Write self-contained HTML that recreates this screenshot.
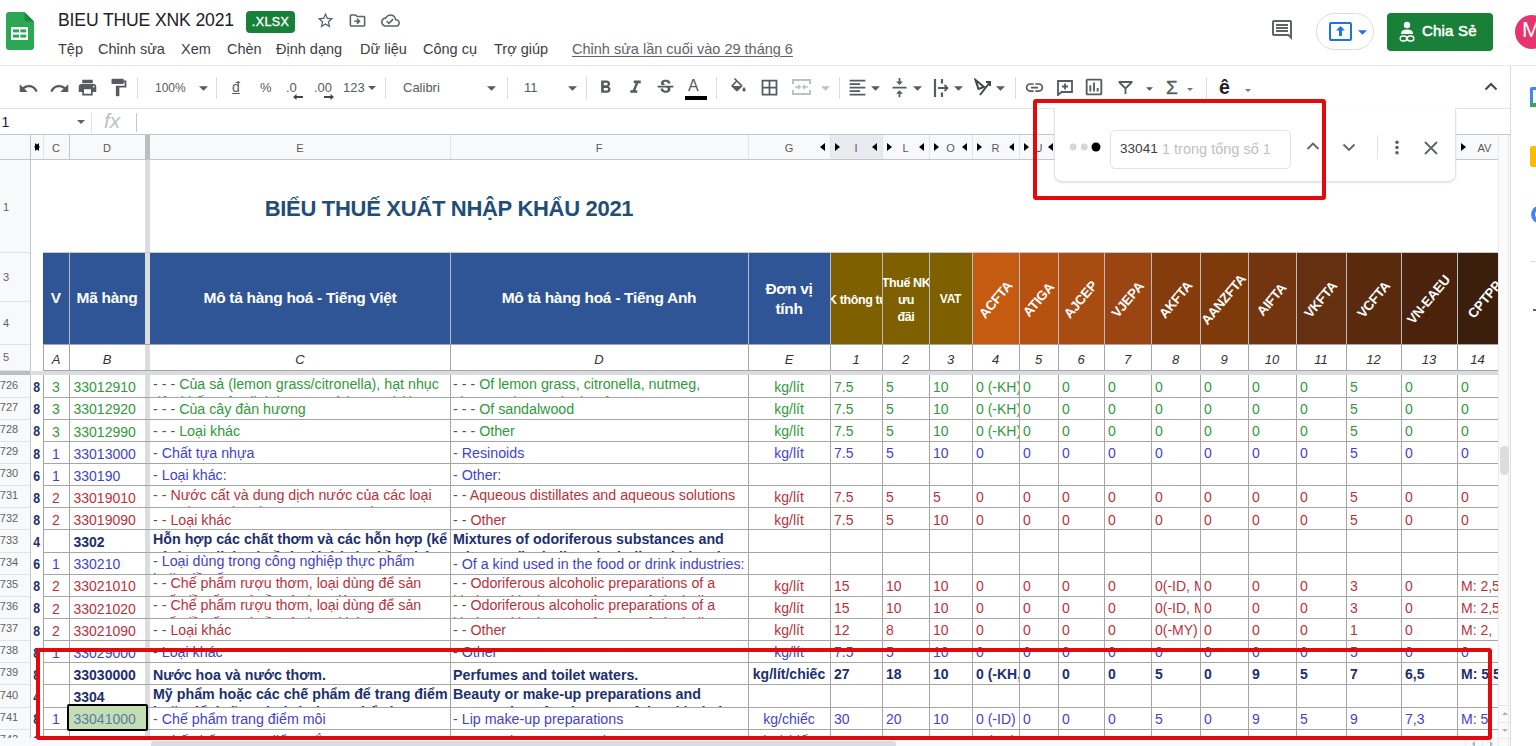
<!DOCTYPE html><html><head><meta charset="utf-8"><title>BIEU THUE XNK 2021</title><style>
html,body{margin:0;padding:0;width:1536px;height:746px;overflow:hidden;background:#fff;}
body{position:relative;font-family:"Liberation Sans", sans-serif;}
div{box-sizing:border-box;}
</style></head><body>
<svg style="position:absolute;left:6px;top:12px" width="28" height="38" viewBox="0 0 28 38"><path d="M3 0H18.5L28 9.5V35Q28 38 25 38H3Q0 38 0 35V3Q0 0 3 0z" fill="#2aa853"/><path d="M18.5 0L28 9.5H21Q18.5 9.5 18.5 7z" fill="#198a3e"/><rect x="5" y="15" width="17" height="13" fill="#fff"/><rect x="7" y="17.4" width="6" height="3" fill="#2aa853"/><rect x="14.4" y="17.4" width="5.8" height="3" fill="#2aa853"/><rect x="7" y="22.6" width="6" height="3" fill="#2aa853"/><rect x="14.4" y="22.6" width="5.8" height="3" fill="#2aa853"/></svg>
<div style="position:absolute;top:12.10px;font-size:17.6px;line-height:1;white-space:nowrap;color:#202124;left:58px;letter-spacing:-0.15px;">BIEU THUE XNK 2021</div>
<div style="position:absolute;left:246px;top:11px;width:49px;height:22px;background:#188038;border-radius:4px;"></div>
<div style="position:absolute;top:16.42px;font-size:12.5px;line-height:1;white-space:nowrap;color:#fff;left:246px;width:49px;text-align:center;letter-spacing:0.4px;-webkit-text-stroke:0.35px #fff;">.XLSX</div>
<svg style="position:absolute;left:316px;top:11px" width="19" height="19" viewBox="0 0 24 24"><path d="M22 9.24l-7.19-.62L12 2 9.19 8.63 2 9.24l5.46 4.73L5.82 21 12 17.27 18.18 21l-1.63-7.03L22 9.24zM12 15.4l-3.76 2.27 1-4.28-3.32-2.88 4.38-.38L12 6.1l1.71 4.04 4.38.38-3.32 2.88 1 4.28L12 15.4z" fill="#5f6368"/></svg>
<svg style="position:absolute;left:348px;top:11px" width="19" height="19" viewBox="0 0 24 24"><path d="M20 6h-8l-2-2H4c-1.1 0-1.99.9-1.99 2L2 18c0 1.1.9 2 2 2h16c1.1 0 2-.9 2-2V8c0-1.1-.9-2-2-2zm0 12H4V6h5.17l2 2H20v10zm-7.84-6H8v2h4.16l-1.59 1.59L11.99 17 16 13.01 11.99 9l-1.41 1.41L12.16 12z" fill="#5f6368"/></svg>
<svg style="position:absolute;left:381px;top:11px" width="19" height="19" viewBox="0 0 24 24"><path d="M19.35 10.04C18.67 6.59 15.64 4 12 4 9.11 4 6.6 5.64 5.35 8.04 2.34 8.36 0 10.91 0 14c0 3.31 2.69 6 6 6h13c2.76 0 5-2.24 5-5 0-2.64-2.05-4.78-4.65-4.96zM19 18H6c-2.21 0-4-1.79-4-4 0-2.05 1.53-3.76 3.56-3.97l1.07-.11.5-.95C8.08 7.14 9.94 6 12 6c2.62 0 4.88 1.86 5.39 4.43l.3 1.5 1.53.11c1.56.1 2.78 1.41 2.78 2.96 0 1.65-1.35 3-3 3zm-9-3.82l-2.09-2.09L6.5 13.5 10 17l6.01-6.01-1.41-1.41z" fill="#5f6368"/></svg>
<div style="position:absolute;top:41.73px;font-size:14.5px;line-height:1;white-space:nowrap;color:#3c4043;left:58px;">Tệp</div>
<div style="position:absolute;top:41.73px;font-size:14.5px;line-height:1;white-space:nowrap;color:#3c4043;left:98px;">Chỉnh sửa</div>
<div style="position:absolute;top:41.73px;font-size:14.5px;line-height:1;white-space:nowrap;color:#3c4043;left:181px;">Xem</div>
<div style="position:absolute;top:41.73px;font-size:14.5px;line-height:1;white-space:nowrap;color:#3c4043;left:227px;">Chèn</div>
<div style="position:absolute;top:41.73px;font-size:14.5px;line-height:1;white-space:nowrap;color:#3c4043;left:276px;">Định dạng</div>
<div style="position:absolute;top:41.73px;font-size:14.5px;line-height:1;white-space:nowrap;color:#3c4043;left:360px;">Dữ liệu</div>
<div style="position:absolute;top:41.73px;font-size:14.5px;line-height:1;white-space:nowrap;color:#3c4043;left:423px;">Công cụ</div>
<div style="position:absolute;top:41.73px;font-size:14.5px;line-height:1;white-space:nowrap;color:#3c4043;left:494px;">Trợ giúp</div>
<div style="position:absolute;top:41.73px;font-size:14.5px;line-height:1;white-space:nowrap;color:#5f6368;left:572px;text-decoration:underline;text-underline-offset:2px;">Chỉnh sửa lần cuối vào 29 tháng 6</div>
<svg style="position:absolute;left:1270px;top:18px" width="24" height="24" viewBox="0 0 24 24"><path d="M21.99 4c0-1.1-.89-2-1.99-2H4c-1.1 0-2 .9-2 2v12c0 1.1.9 2 2 2h14l4 4-.01-18zM20 4v13.17L18.83 16H4V4h16zM6 12h12v2H6zm0-3h12v2H6zm0-3h12v2H6z" fill="#5f6368"/></svg>
<div style="position:absolute;left:1316px;top:13px;width:58px;height:37px;border:1px solid #dadce0;border-radius:19px;"></div>
<div style="position:absolute;left:1329px;top:22px;width:23px;height:19px;border:2px solid #1a73e8;border-radius:2px;"></div>
<svg style="position:absolute;left:1335px;top:25px" width="11" height="12" viewBox="0 0 11 12"><path d="M5.5 1L1 5.5H4V11H7V5.5H10z" fill="#1a73e8"/></svg>
<svg style="position:absolute;left:1358px;top:30px" width="9" height="5" viewBox="0 0 10 5"><path d="M0 0L10 0L5 5z" fill="#1a73e8"/></svg>
<div style="position:absolute;left:1387px;top:13px;width:106px;height:38px;background:#188038;border-radius:4px;"></div>
<svg style="position:absolute;left:1399px;top:21px" width="16" height="22" viewBox="0 0 16 22"><circle cx="8" cy="4" r="3.2" fill="#fff"/><path d="M2 12.5Q2 8.5 8 8.5Q14 8.5 14 12.5V13H2z" fill="#fff"/><rect x="1.2" y="15" width="6.5" height="5" rx="2.5" fill="none" stroke="#fff" stroke-width="1.4"/><rect x="8.3" y="15" width="6.5" height="5" rx="2.5" fill="none" stroke="#fff" stroke-width="1.4"/></svg>
<div style="position:absolute;top:23.30px;font-size:15px;line-height:1;white-space:nowrap;color:#fff;left:1422px;letter-spacing:0.2px;-webkit-text-stroke:0.55px #fff;">Chia Sẻ</div>
<div style="position:absolute;left:1515px;top:15px;width:34px;height:34px;background:#e8336d;border-radius:50%;"></div>
<div style="position:absolute;top:19.38px;font-size:22px;line-height:1;white-space:nowrap;color:#fff;left:1522px;">M</div>
<div style="position:absolute;left:0px;top:65px;width:1536px;height:1px;background:#e8eaed;"></div>
<svg style="position:absolute;left:17.5px;top:78px" width="21" height="19.25" viewBox="0 0 24 22"><path d="M12.5 8c-2.65 0-5.05.99-6.9 2.6L2 7v9h9l-3.62-3.62c1.39-1.16 3.16-1.88 5.12-1.88 3.54 0 6.55 2.31 7.6 5.5l2.37-.78C21.08 11.03 17.15 8 12.5 8z" fill="#575a5e"/></svg>
<svg style="position:absolute;left:48.5px;top:78px" width="21" height="19.25" viewBox="0 0 24 22"><path d="M18.4 10.6C16.55 8.99 14.15 8 11.5 8c-4.65 0-8.58 3.03-9.96 7.22L3.9 16c1.05-3.19 4.05-5.5 7.6-5.5 1.95 0 3.73.72 5.12 1.88L13 16h9V7l-3.6 3.6z" fill="#575a5e"/></svg>
<svg style="position:absolute;left:77px;top:77px" width="21" height="21" viewBox="0 0 24 24"><path d="M19 8H5c-1.66 0-3 1.34-3 3v6h4v4h12v-4h4v-6c0-1.66-1.34-3-3-3zm-3 11H8v-5h8v5zm3-7c-.55 0-1-.45-1-1s.45-1 1-1 1 .45 1 1-.45 1-1 1zm-1-9H6v4h12V3z" fill="#575a5e"/></svg>
<svg style="position:absolute;left:108px;top:77px" width="21" height="21" viewBox="0 0 24 24"><path d="M18 4V3c0-.55-.45-1-1-1H5c-.55 0-1 .45-1 1v4c0 .55.45 1 1 1h12c.55 0 1-.45 1-1V6h1v4H9v11c0 .55.45 1 1 1h2c.55 0 1-.45 1-1v-9h8V4h-3z" fill="#575a5e"/></svg>
<div style="position:absolute;left:137px;top:77px;width:1px;height:22px;background:#dadce0;"></div>
<div style="position:absolute;top:81.84px;font-size:12px;line-height:1;white-space:nowrap;color:#575a5e;left:155px;">100%</div>
<svg style="position:absolute;left:199px;top:86px" width="9" height="5" viewBox="0 0 10 5"><path d="M0 0L10 0L5 5z" fill="#575a5e"/></svg>
<div style="position:absolute;left:216px;top:77px;width:1px;height:22px;background:#dadce0;"></div>
<div style="position:absolute;top:80.15px;font-size:14px;line-height:1;white-space:nowrap;color:#575a5e;left:232px;text-decoration:underline;">đ</div>
<div style="position:absolute;top:81.00px;font-size:13px;line-height:1;white-space:nowrap;color:#575a5e;left:260px;">%</div>
<div style="position:absolute;top:81.00px;font-size:13px;line-height:1;white-space:nowrap;color:#575a5e;left:286px;">.0</div>
<svg style="position:absolute;left:293px;top:94px" width="10" height="6" viewBox="0 0 10 6"><path d="M0 3L3.5 0V2H10V4H3.5V6z" fill="#444746"/></svg>
<div style="position:absolute;top:81.00px;font-size:13px;line-height:1;white-space:nowrap;color:#575a5e;left:314px;">.00</div>
<svg style="position:absolute;left:324px;top:94px" width="10" height="6" viewBox="0 0 10 6"><path d="M10 3L6.5 0V2H0V4H6.5V6z" fill="#444746"/></svg>
<div style="position:absolute;top:81.00px;font-size:13px;line-height:1;white-space:nowrap;color:#575a5e;left:343px;">123</div>
<svg style="position:absolute;left:368px;top:86px" width="8" height="4" viewBox="0 0 10 5"><path d="M0 0L10 0L5 5z" fill="#575a5e"/></svg>
<div style="position:absolute;left:385px;top:77px;width:1px;height:22px;background:#dadce0;"></div>
<div style="position:absolute;top:81.00px;font-size:13px;line-height:1;white-space:nowrap;color:#575a5e;left:403px;">Calibri</div>
<svg style="position:absolute;left:487px;top:86px" width="9" height="5" viewBox="0 0 10 5"><path d="M0 0L10 0L5 5z" fill="#575a5e"/></svg>
<div style="position:absolute;left:507px;top:77px;width:1px;height:22px;background:#dadce0;"></div>
<div style="position:absolute;top:81.00px;font-size:13px;line-height:1;white-space:nowrap;color:#575a5e;left:524px;">11</div>
<svg style="position:absolute;left:568px;top:86px" width="9" height="5" viewBox="0 0 10 5"><path d="M0 0L10 0L5 5z" fill="#575a5e"/></svg>
<div style="position:absolute;left:586px;top:77px;width:1px;height:22px;background:#dadce0;"></div>
<svg style="position:absolute;left:595px;top:77px" width="21" height="21" viewBox="0 0 24 24"><path d="M15.6 10.79c.97-.67 1.65-1.77 1.65-2.79 0-2.26-1.75-4-4-4H7v14h7.04c2.09 0 3.71-1.7 3.71-3.79 0-1.52-.86-2.82-2.15-3.42zM10 6.5h3c.83 0 1.5.67 1.5 1.5s-.67 1.5-1.5 1.5h-3v-3zm3.5 9H10v-3h3.5c.83 0 1.5.67 1.5 1.5s-.67 1.5-1.5 1.5z" fill="#575a5e"/></svg>
<svg style="position:absolute;left:625px;top:77px" width="21" height="21" viewBox="0 0 24 24"><path d="M10 4v3h2.21l-3.42 8H6v3h8v-3h-2.21l3.42-8H18V4z" fill="#575a5e"/></svg>
<svg style="position:absolute;left:655px;top:77px" width="21" height="21" viewBox="0 0 24 24"><path d="M7.24 8.75c-.26-.48-.39-1.03-.39-1.67 0-.61.13-1.16.4-1.67.26-.5.63-.93 1.11-1.29.48-.35 1.05-.63 1.7-.83.66-.19 1.39-.29 2.18-.29.81 0 1.54.11 2.21.34.66.22 1.23.54 1.69.94.47.4.83.88 1.08 1.43.25.55.38 1.15.38 1.81h-3.01c0-.31-.05-.59-.15-.85-.09-.27-.24-.49-.44-.68-.2-.19-.45-.33-.75-.44-.3-.1-.66-.16-1.06-.16-.39 0-.74.04-1.03.13-.29.09-.53.21-.72.36-.19.16-.34.34-.44.55-.1.21-.15.43-.15.66 0 .48.25.88.74 1.21.38.25.77.48 1.41.7H7.39c-.05-.08-.11-.17-.15-.25zM21 12v-2H3v2h9.62c.18.07.4.14.55.2.37.17.66.34.87.51.21.17.35.36.43.57.07.2.11.43.11.69 0 .23-.05.45-.14.66-.09.2-.23.38-.42.53-.19.15-.42.26-.71.35-.29.08-.63.13-1.01.13-.43 0-.83-.04-1.18-.13s-.66-.23-.91-.42c-.25-.19-.45-.44-.59-.75-.14-.31-.25-.76-.25-1.21H6.4c0 .55.08 1.13.24 1.58.16.45.37.85.65 1.21.28.35.6.66.98.92.37.26.78.48 1.22.65.44.17.9.3 1.38.39.48.08.96.13 1.44.13.8 0 1.53-.09 2.18-.28s1.21-.45 1.67-.79c.46-.34.82-.77 1.07-1.27s.38-1.07.38-1.71c0-.6-.1-1.14-.31-1.61-.05-.11-.11-.23-.17-.33H21z" fill="#575a5e"/></svg>
<div style="position:absolute;top:78.46px;font-size:16px;line-height:1;white-space:nowrap;color:#575a5e;left:688px;">A</div>
<div style="position:absolute;left:685px;top:96px;width:22px;height:4px;background:#000;"></div>
<div style="position:absolute;left:716px;top:77px;width:1px;height:22px;background:#dadce0;"></div>
<svg style="position:absolute;left:729px;top:78px" width="19" height="19" viewBox="0 0 24 24"><path d="M16.56 8.94L7.62 0 6.21 1.41l2.38 2.38-5.15 5.15c-.59.59-.59 1.54 0 2.12l5.5 5.5c.29.29.68.44 1.06.44s.77-.15 1.06-.44l5.5-5.5c.59-.58.59-1.53 0-2.12zM5.21 10L10 5.21 14.79 10H5.21zM19 11.5s-2 2.17-2 3.5c0 1.1.9 2 2 2s2-.9 2-2c0-1.33-2-3.5-2-3.5z" fill="#575a5e"/></svg>
<svg style="position:absolute;left:759px;top:77px" width="21" height="21" viewBox="0 0 24 24"><path d="M3 3v18h18V3H3zm8 16H5v-6h6v6zm0-8H5V5h6v6zm8 8h-6v-6h6v6zm0-8h-6V5h6v6z" fill="#575a5e"/></svg>
<svg style="position:absolute;left:792px;top:79px" width="19" height="16" viewBox="0 0 19 16" fill="none" stroke="#bdc1c6" stroke-width="2"><path d="M1 5V1H18V5M1 11V15H18V11"/><path d="M3 8H8M6 6L8 8L6 10M16 8H11M13 6L11 8L13 10" stroke-width="1.6"/></svg>
<svg style="position:absolute;left:821px;top:86px" width="9" height="5" viewBox="0 0 10 5"><path d="M0 0L10 0L5 5z" fill="#bdc1c6"/></svg>
<div style="position:absolute;left:839px;top:77px;width:1px;height:22px;background:#dadce0;"></div>
<svg style="position:absolute;left:847px;top:77px" width="21" height="21" viewBox="0 0 24 24"><path d="M15 15H3v2h12v-2zm0-8H3v2h12V7zM3 13h18v-2H3v2zm0 8h18v-2H3v2zM3 3v2h18V3H3z" fill="#575a5e"/></svg>
<svg style="position:absolute;left:871px;top:86px" width="9" height="5" viewBox="0 0 10 5"><path d="M0 0L10 0L5 5z" fill="#575a5e"/></svg>
<svg style="position:absolute;left:889px;top:77px" width="21" height="21" viewBox="0 0 24 24"><path d="M8 19h3v4h2v-4h3l-4-4-4 4zm8-14h-3V1h-2v4H8l4 4 4-4zM4 11v2h16v-2H4z" fill="#575a5e"/></svg>
<svg style="position:absolute;left:913px;top:86px" width="9" height="5" viewBox="0 0 10 5"><path d="M0 0L10 0L5 5z" fill="#575a5e"/></svg>
<svg style="position:absolute;left:933px;top:79px" width="17" height="18" viewBox="0 0 17 18" fill="none" stroke="#575a5e" stroke-width="2.2"><path d="M2 0V18"/><path d="M9 0V4.5M9 13.5V18" /><path d="M5 9H14.5M11.5 6L14.5 9L11.5 12" stroke-width="1.8"/></svg>
<svg style="position:absolute;left:954px;top:86px" width="9" height="5" viewBox="0 0 10 5"><path d="M0 0L10 0L5 5z" fill="#575a5e"/></svg>
<svg style="position:absolute;left:974px;top:78px" width="18" height="19" viewBox="0 0 18 19" fill="none" stroke="#444746" stroke-width="2"><path d="M1.5 2L10 9L4.5 11z"/><path d="M6 17L16 4M12 4H16V8"/></svg>
<svg style="position:absolute;left:996px;top:86px" width="9" height="5" viewBox="0 0 10 5"><path d="M0 0L10 0L5 5z" fill="#575a5e"/></svg>
<div style="position:absolute;left:1015px;top:77px;width:1px;height:22px;background:#dadce0;"></div>
<svg style="position:absolute;left:1024px;top:77px" width="21" height="21" viewBox="0 0 24 24"><path d="M3.9 12c0-1.71 1.39-3.1 3.1-3.1h4V7H7c-2.76 0-5 2.24-5 5s2.24 5 5 5h4v-1.9H7c-1.71 0-3.1-1.39-3.1-3.1zM8 13h8v-2H8v2zm9-6h-4v1.9h4c1.71 0 3.1 1.39 3.1 3.1s-1.39 3.1-3.1 3.1h-4V17h4c2.76 0 5-2.24 5-5s-2.24-5-5-5z" fill="#575a5e"/></svg>
<svg style="position:absolute;left:1057px;top:80px" width="16" height="16" viewBox="0 0 16 16" fill="none" stroke="#575a5e" stroke-width="1.8"><path d="M1 1H15V12H4.5L1 15z" stroke-linejoin="miter"/><path d="M8 3.5V9.5M5 6.5H11"/></svg>
<svg style="position:absolute;left:1083px;top:76px" width="22" height="22" viewBox="0 0 24 24"><path d="M19 3H5c-1.1 0-2 .9-2 2v14c0 1.1.9 2 2 2h14c1.1 0 2-.9 2-2V5c0-1.1-.9-2-2-2zm0 16H5V5h14v14zM7 10h2v7H7zm4-3h2v10h-2zm4 6h2v4h-2z" fill="#575a5e"/></svg>
<svg style="position:absolute;left:1118px;top:81px" width="15" height="13" viewBox="0 0 15 13" fill="none" stroke="#575a5e" stroke-width="1.8"><path d="M0.5 1H14.5M1.5 1.5L7.5 7.5L13.5 1.5M7.5 7V13"/></svg>
<svg style="position:absolute;left:1146px;top:87px" width="7" height="4" viewBox="0 0 10 5"><path d="M0 0L10 0L5 5z" fill="#575a5e"/></svg>
<div style="position:absolute;top:77.92px;font-size:19px;line-height:1;white-space:nowrap;color:#575a5e;left:1166px;-webkit-text-stroke:0.4px #575a5e;">Σ</div>
<svg style="position:absolute;left:1187px;top:88px" width="6" height="3" viewBox="0 0 10 5"><path d="M0 0L10 0L5 5z" fill="#777"/></svg>
<div style="position:absolute;left:1206px;top:77px;width:1px;height:22px;background:#dadce0;"></div>
<div style="position:absolute;top:77.99px;font-size:19.5px;line-height:1;white-space:nowrap;color:#202124;font-weight:bold;left:1219px;">ê</div>
<svg style="position:absolute;left:1245px;top:89px" width="6" height="3" viewBox="0 0 10 5"><path d="M0 0L10 0L5 5z" fill="#777"/></svg>
<svg style="position:absolute;left:1484px;top:81px" width="14" height="10" viewBox="0 0 14 10"><path d="M1.5 8.5L7 3L12.5 8.5" fill="none" stroke="#444746" stroke-width="2"/></svg>
<div style="position:absolute;left:0px;top:108px;width:1510px;height:1px;background:#e3e3e3;"></div>
<div style="position:absolute;top:115.15px;font-size:14px;line-height:1;white-space:nowrap;color:#202124;left:1.5px;">1</div>
<svg style="position:absolute;left:77px;top:120px" width="8" height="4" viewBox="0 0 10 5"><path d="M0 0L10 0L5 5z" fill="#5f6368"/></svg>
<div style="position:absolute;left:91px;top:113px;width:1px;height:20px;background:#e0e0e0;"></div>
<div style="position:absolute;top:110.22px;font-size:21px;line-height:1;white-space:nowrap;color:#bdc1c6;left:104px;font-family:"Liberation Serif",serif;"><i>fx</i></div>
<div style="position:absolute;left:136px;top:113px;width:1px;height:19px;background:#c8c8c8;"></div>
<div style="position:absolute;left:0px;top:134px;width:1510px;height:1px;background:#c8c8c8;"></div>
<div style="position:absolute;left:0px;top:135px;width:1498px;height:24px;background:#f8f9fa;"></div>
<div style="position:absolute;left:0px;top:159px;width:1498px;height:1px;background:#c4c7c5;"></div>
<div style="position:absolute;left:30px;top:135px;width:1px;height:24px;background:#c4c7c5;"></div>
<div style="position:absolute;left:43px;top:135px;width:1px;height:24px;background:#e1e3e6;"></div>
<div style="position:absolute;left:69px;top:135px;width:1px;height:24px;background:#c4c7c5;"></div>
<div style="position:absolute;left:450px;top:135px;width:1px;height:24px;background:#e1e3e6;"></div>
<div style="position:absolute;left:748px;top:135px;width:1px;height:24px;background:#e1e3e6;"></div>
<div style="position:absolute;left:830px;top:135px;width:1px;height:24px;background:#e1e3e6;"></div>
<div style="position:absolute;left:882px;top:135px;width:1px;height:24px;background:#e1e3e6;"></div>
<div style="position:absolute;left:929px;top:135px;width:1px;height:24px;background:#e1e3e6;"></div>
<div style="position:absolute;left:972px;top:135px;width:1px;height:24px;background:#e1e3e6;"></div>
<div style="position:absolute;left:1019px;top:135px;width:1px;height:24px;background:#e1e3e6;"></div>
<div style="position:absolute;left:831px;top:135px;width:51px;height:24px;background:#e8eaed;"></div>
<div style="position:absolute;left:145px;top:135px;width:5px;height:24px;background:#bdbdbd;"></div>
<div style="position:absolute;top:142.69px;font-size:11px;line-height:1;white-space:nowrap;color:#575a5e;left:43px;width:26px;text-align:center;">C</div>
<div style="position:absolute;top:142.69px;font-size:11px;line-height:1;white-space:nowrap;color:#575a5e;left:69px;width:76px;text-align:center;">D</div>
<div style="position:absolute;top:142.69px;font-size:11px;line-height:1;white-space:nowrap;color:#575a5e;left:150px;width:300px;text-align:center;">E</div>
<div style="position:absolute;top:142.69px;font-size:11px;line-height:1;white-space:nowrap;color:#575a5e;left:450px;width:298px;text-align:center;">F</div>
<div style="position:absolute;top:142.69px;font-size:11px;line-height:1;white-space:nowrap;color:#575a5e;left:748px;width:82px;text-align:center;">G</div>
<div style="position:absolute;top:142.69px;font-size:11px;line-height:1;white-space:nowrap;color:#575a5e;left:830px;width:52px;text-align:center;">I</div>
<div style="position:absolute;top:142.69px;font-size:11px;line-height:1;white-space:nowrap;color:#575a5e;left:882px;width:47px;text-align:center;">L</div>
<div style="position:absolute;top:142.69px;font-size:11px;line-height:1;white-space:nowrap;color:#575a5e;left:929px;width:43px;text-align:center;">O</div>
<div style="position:absolute;top:142.69px;font-size:11px;line-height:1;white-space:nowrap;color:#575a5e;left:972px;width:47px;text-align:center;">R</div>
<div style="position:absolute;top:142.69px;font-size:11px;line-height:1;white-space:nowrap;color:#575a5e;left:1019px;width:39px;text-align:center;">U</div>
<svg style="position:absolute;left:35px;top:143px" width="5" height="8" viewBox="0 0 5 8"><path d="M0 0V8L5 4z" fill="#000"/></svg>
<svg style="position:absolute;left:34px;top:143px" width="5" height="8" viewBox="0 0 5 8"><path d="M5 0V8L0 4z" fill="#000"/></svg>
<svg style="position:absolute;left:820px;top:143px" width="5" height="8" viewBox="0 0 5 8"><path d="M5 0V8L0 4z" fill="#000"/></svg>
<svg style="position:absolute;left:872px;top:143px" width="5" height="8" viewBox="0 0 5 8"><path d="M5 0V8L0 4z" fill="#000"/></svg>
<svg style="position:absolute;left:919px;top:143px" width="5" height="8" viewBox="0 0 5 8"><path d="M5 0V8L0 4z" fill="#000"/></svg>
<svg style="position:absolute;left:962px;top:143px" width="5" height="8" viewBox="0 0 5 8"><path d="M5 0V8L0 4z" fill="#000"/></svg>
<svg style="position:absolute;left:1009px;top:143px" width="5" height="8" viewBox="0 0 5 8"><path d="M5 0V8L0 4z" fill="#000"/></svg>
<svg style="position:absolute;left:1048px;top:143px" width="5" height="8" viewBox="0 0 5 8"><path d="M5 0V8L0 4z" fill="#000"/></svg>
<svg style="position:absolute;left:835px;top:143px" width="5" height="8" viewBox="0 0 5 8"><path d="M0 0V8L5 4z" fill="#000"/></svg>
<svg style="position:absolute;left:887px;top:143px" width="5" height="8" viewBox="0 0 5 8"><path d="M0 0V8L5 4z" fill="#000"/></svg>
<svg style="position:absolute;left:934px;top:143px" width="5" height="8" viewBox="0 0 5 8"><path d="M0 0V8L5 4z" fill="#000"/></svg>
<svg style="position:absolute;left:977px;top:143px" width="5" height="8" viewBox="0 0 5 8"><path d="M0 0V8L5 4z" fill="#000"/></svg>
<svg style="position:absolute;left:1024px;top:143px" width="5" height="8" viewBox="0 0 5 8"><path d="M0 0V8L5 4z" fill="#000"/></svg>
<svg style="position:absolute;left:1461px;top:143px" width="5" height="8" viewBox="0 0 5 8"><path d="M0 0V8L5 4z" fill="#000"/></svg>
<div style="position:absolute;top:142.69px;font-size:11px;line-height:1;white-space:nowrap;color:#575a5e;left:1457px;width:41px;text-align:center;padding-left:14px;">AV</div>
<div style="position:absolute;left:0px;top:160px;width:30px;height:586px;background:#f8f9fa;"></div>
<div style="position:absolute;left:30px;top:160px;width:1px;height:586px;background:#c4c7c5;"></div>
<div style="position:absolute;left:0px;top:252px;width:30px;height:1px;background:#e1e3e6;"></div>
<div style="position:absolute;left:0px;top:301px;width:30px;height:1px;background:#e1e3e6;"></div>
<div style="position:absolute;left:0px;top:344px;width:30px;height:1px;background:#e1e3e6;"></div>
<div style="position:absolute;left:0px;top:370px;width:30px;height:1px;background:#e1e3e6;"></div>
<div style="position:absolute;top:201.69px;font-size:11px;line-height:1;white-space:nowrap;color:#5f6368;left:-14px;width:40px;text-align:center;">1</div>
<div style="position:absolute;top:271.69px;font-size:11px;line-height:1;white-space:nowrap;color:#5f6368;left:-14px;width:40px;text-align:center;">3</div>
<div style="position:absolute;top:317.69px;font-size:11px;line-height:1;white-space:nowrap;color:#5f6368;left:-14px;width:40px;text-align:center;">4</div>
<div style="position:absolute;top:351.69px;font-size:11px;line-height:1;white-space:nowrap;color:#5f6368;left:-14px;width:40px;text-align:center;">5</div>
<div style="position:absolute;left:0px;top:371px;width:1498px;height:4px;background:#dadce0;"></div>
<div style="position:absolute;left:145px;top:160px;width:5px;height:586px;background:#dadce0;"></div>
<div style="position:absolute;left:0px;top:371px;width:30px;height:4px;background:#bdbdbd;"></div>
<div style="position:absolute;top:197.68px;font-size:22px;line-height:1;white-space:nowrap;color:#1f4e79;font-weight:bold;left:150px;width:598px;text-align:center;letter-spacing:-0.3px;">BIỂU THUẾ XUẤT NHẬP KHẨU 2021</div>
<div style="position:absolute;left:43px;top:252px;width:26px;height:92px;background:#2f5597;"></div>
<div style="position:absolute;left:69px;top:252px;width:76px;height:92px;background:#2f5597;"></div>
<div style="position:absolute;left:150px;top:252px;width:300px;height:92px;background:#2f5597;"></div>
<div style="position:absolute;left:450px;top:252px;width:298px;height:92px;background:#2f5597;"></div>
<div style="position:absolute;left:748px;top:252px;width:82px;height:92px;background:#2f5597;"></div>
<div style="position:absolute;left:830px;top:252px;width:52px;height:92px;background:#7f6000;"></div>
<div style="position:absolute;left:882px;top:252px;width:47px;height:92px;background:#7f6000;"></div>
<div style="position:absolute;left:929px;top:252px;width:43px;height:92px;background:#7f6000;"></div>
<div style="position:absolute;left:972px;top:252px;width:47px;height:92px;background:#c55a11;"></div>
<div style="position:absolute;left:1019px;top:252px;width:39px;height:92px;background:#b65110;"></div>
<div style="position:absolute;left:1058px;top:252px;width:46px;height:92px;background:#a94c12;"></div>
<div style="position:absolute;left:1104px;top:252px;width:47px;height:92px;background:#9b4512;"></div>
<div style="position:absolute;left:1151px;top:252px;width:49px;height:92px;background:#843c0c;"></div>
<div style="position:absolute;left:1200px;top:252px;width:48px;height:92px;background:#7f3a0c;"></div>
<div style="position:absolute;left:1248px;top:252px;width:48px;height:92px;background:#723510;"></div>
<div style="position:absolute;left:1296px;top:252px;width:50px;height:92px;background:#65300f;"></div>
<div style="position:absolute;left:1346px;top:252px;width:55px;height:92px;background:#5a2a0e;"></div>
<div style="position:absolute;left:1401px;top:252px;width:56px;height:92px;background:#4b230c;"></div>
<div style="position:absolute;left:1457px;top:252px;width:41px;height:92px;background:#3b1e0c;"></div>
<div style="position:absolute;left:69px;top:252px;width:1px;height:92px;background:#b8bcc4;"></div>
<div style="position:absolute;left:450px;top:252px;width:1px;height:92px;background:#b8bcc4;"></div>
<div style="position:absolute;left:748px;top:252px;width:1px;height:92px;background:#b8bcc4;"></div>
<div style="position:absolute;left:830px;top:252px;width:1px;height:92px;background:#b8bcc4;"></div>
<div style="position:absolute;left:882px;top:252px;width:1px;height:92px;background:#b8bcc4;"></div>
<div style="position:absolute;left:929px;top:252px;width:1px;height:92px;background:#b8bcc4;"></div>
<div style="position:absolute;left:972px;top:252px;width:1px;height:92px;background:#b8bcc4;"></div>
<div style="position:absolute;left:1019px;top:252px;width:1px;height:92px;background:#b8bcc4;"></div>
<div style="position:absolute;left:1058px;top:252px;width:1px;height:92px;background:#b8bcc4;"></div>
<div style="position:absolute;left:1104px;top:252px;width:1px;height:92px;background:#b8bcc4;"></div>
<div style="position:absolute;left:1151px;top:252px;width:1px;height:92px;background:#b8bcc4;"></div>
<div style="position:absolute;left:1200px;top:252px;width:1px;height:92px;background:#b8bcc4;"></div>
<div style="position:absolute;left:1248px;top:252px;width:1px;height:92px;background:#b8bcc4;"></div>
<div style="position:absolute;left:1296px;top:252px;width:1px;height:92px;background:#b8bcc4;"></div>
<div style="position:absolute;left:1346px;top:252px;width:1px;height:92px;background:#b8bcc4;"></div>
<div style="position:absolute;left:1401px;top:252px;width:1px;height:92px;background:#b8bcc4;"></div>
<div style="position:absolute;left:1457px;top:252px;width:1px;height:92px;background:#b8bcc4;"></div>
<div style="position:absolute;left:43px;top:252px;width:1455px;height:1px;background:#c9c9c9;"></div>
<div style="position:absolute;top:289.88px;font-size:15.5px;line-height:1;white-space:nowrap;color:#ffffff;font-weight:bold;left:43px;width:26px;text-align:center;">V</div>
<div style="position:absolute;top:289.88px;font-size:15.5px;line-height:1;white-space:nowrap;color:#ffffff;font-weight:bold;left:69px;width:76px;text-align:center;letter-spacing:-0.3px;">Mã hàng</div>
<div style="position:absolute;top:289.88px;font-size:15.5px;line-height:1;white-space:nowrap;color:#ffffff;font-weight:bold;left:150px;width:300px;text-align:center;letter-spacing:-0.3px;">Mô tả hàng hoá - Tiếng Việt</div>
<div style="position:absolute;top:289.88px;font-size:15.5px;line-height:1;white-space:nowrap;color:#ffffff;font-weight:bold;left:450px;width:298px;text-align:center;letter-spacing:-0.3px;">Mô tả hàng hoá - Tiếng Anh</div>
<div style="position:absolute;top:280.88px;font-size:15.5px;line-height:1;white-space:nowrap;color:#ffffff;font-weight:bold;left:748px;width:82px;text-align:center;letter-spacing:-0.3px;">Đơn vị</div>
<div style="position:absolute;top:300.88px;font-size:15.5px;line-height:1;white-space:nowrap;color:#ffffff;font-weight:bold;left:748px;width:82px;text-align:center;letter-spacing:-0.3px;">tính</div>
<div style="position:absolute;left:831px;top:252px;width:51px;height:92px;overflow:hidden;"><div style="position:absolute;left:-3px;top:42px;font-size:12.5px;line-height:1;font-weight:bold;color:#fff;white-space:nowrap;letter-spacing:-0.4px;">K thông tư</div></div>
<div style="position:absolute;left:883px;top:252px;width:46px;height:92px;overflow:hidden;"><div style="position:absolute;left:-4px;top:23px;width:54px;text-align:center;font-size:12.5px;line-height:17px;font-weight:bold;color:#fff;white-space:nowrap;letter-spacing:-0.4px;">Thuế NK<br>ưu<br>đãi</div></div>
<div style="position:absolute;top:292.84px;font-size:12px;line-height:1;white-space:nowrap;color:#ffffff;font-weight:bold;left:929px;width:43px;text-align:center;letter-spacing:-0.3px;">VAT</div>
<div style="position:absolute;left:973px;top:252px;width:46px;height:92px;overflow:hidden;"><div style="position:absolute;left:-17.5px;top:41px;width:80px;text-align:center;font-size:13.5px;line-height:14px;font-weight:bold;color:#fff;white-space:nowrap;transform:rotate(-50deg);letter-spacing:-0.3px;">ACFTA</div></div>
<div style="position:absolute;left:1020px;top:252px;width:38px;height:92px;overflow:hidden;"><div style="position:absolute;left:-21.5px;top:41px;width:80px;text-align:center;font-size:13.5px;line-height:14px;font-weight:bold;color:#fff;white-space:nowrap;transform:rotate(-50deg);letter-spacing:-0.3px;">ATIGA</div></div>
<div style="position:absolute;left:1059px;top:252px;width:45px;height:92px;overflow:hidden;"><div style="position:absolute;left:-18.0px;top:41px;width:80px;text-align:center;font-size:13.5px;line-height:14px;font-weight:bold;color:#fff;white-space:nowrap;transform:rotate(-50deg);letter-spacing:-0.3px;">AJCEP</div></div>
<div style="position:absolute;left:1105px;top:252px;width:46px;height:92px;overflow:hidden;"><div style="position:absolute;left:-17.5px;top:41px;width:80px;text-align:center;font-size:13.5px;line-height:14px;font-weight:bold;color:#fff;white-space:nowrap;transform:rotate(-50deg);letter-spacing:-0.3px;">VJEPA</div></div>
<div style="position:absolute;left:1152px;top:252px;width:48px;height:92px;overflow:hidden;"><div style="position:absolute;left:-16.5px;top:41px;width:80px;text-align:center;font-size:13.5px;line-height:14px;font-weight:bold;color:#fff;white-space:nowrap;transform:rotate(-50deg);letter-spacing:-0.3px;">AKFTA</div></div>
<div style="position:absolute;left:1201px;top:252px;width:47px;height:92px;overflow:hidden;"><div style="position:absolute;left:-17.0px;top:41px;width:80px;text-align:center;font-size:13.5px;line-height:14px;font-weight:bold;color:#fff;white-space:nowrap;transform:rotate(-50deg);letter-spacing:-0.3px;">AANZFTA</div></div>
<div style="position:absolute;left:1249px;top:252px;width:47px;height:92px;overflow:hidden;"><div style="position:absolute;left:-17.0px;top:41px;width:80px;text-align:center;font-size:13.5px;line-height:14px;font-weight:bold;color:#fff;white-space:nowrap;transform:rotate(-50deg);letter-spacing:-0.3px;">AIFTA</div></div>
<div style="position:absolute;left:1297px;top:252px;width:49px;height:92px;overflow:hidden;"><div style="position:absolute;left:-16.0px;top:41px;width:80px;text-align:center;font-size:13.5px;line-height:14px;font-weight:bold;color:#fff;white-space:nowrap;transform:rotate(-50deg);letter-spacing:-0.3px;">VKFTA</div></div>
<div style="position:absolute;left:1347px;top:252px;width:54px;height:92px;overflow:hidden;"><div style="position:absolute;left:-13.5px;top:41px;width:80px;text-align:center;font-size:13.5px;line-height:14px;font-weight:bold;color:#fff;white-space:nowrap;transform:rotate(-50deg);letter-spacing:-0.3px;">VCFTA</div></div>
<div style="position:absolute;left:1402px;top:252px;width:55px;height:92px;overflow:hidden;"><div style="position:absolute;left:-13.0px;top:41px;width:80px;text-align:center;font-size:13.5px;line-height:14px;font-weight:bold;color:#fff;white-space:nowrap;transform:rotate(-50deg);letter-spacing:-0.3px;">VN-EAEU</div></div>
<div style="position:absolute;left:1458px;top:252px;width:40px;height:92px;overflow:hidden;"><div style="position:absolute;left:-13.5px;top:41px;width:80px;text-align:center;font-size:13.5px;line-height:14px;font-weight:bold;color:#fff;white-space:nowrap;transform:rotate(-50deg);letter-spacing:-0.3px;">CPTPP</div></div>
<div style="position:absolute;left:43px;top:344px;width:1455px;height:1px;background:#a6a6a6;"></div>
<div style="position:absolute;left:43px;top:370px;width:1455px;height:1px;background:#a6a6a6;"></div>
<div style="position:absolute;left:43px;top:344px;width:1px;height:27px;background:#a6a6a6;"></div>
<div style="position:absolute;left:69px;top:344px;width:1px;height:27px;background:#a6a6a6;"></div>
<div style="position:absolute;left:450px;top:344px;width:1px;height:27px;background:#a6a6a6;"></div>
<div style="position:absolute;left:748px;top:344px;width:1px;height:27px;background:#a6a6a6;"></div>
<div style="position:absolute;left:830px;top:344px;width:1px;height:27px;background:#a6a6a6;"></div>
<div style="position:absolute;left:882px;top:344px;width:1px;height:27px;background:#a6a6a6;"></div>
<div style="position:absolute;left:929px;top:344px;width:1px;height:27px;background:#a6a6a6;"></div>
<div style="position:absolute;left:972px;top:344px;width:1px;height:27px;background:#a6a6a6;"></div>
<div style="position:absolute;left:1019px;top:344px;width:1px;height:27px;background:#a6a6a6;"></div>
<div style="position:absolute;left:1058px;top:344px;width:1px;height:27px;background:#a6a6a6;"></div>
<div style="position:absolute;left:1104px;top:344px;width:1px;height:27px;background:#a6a6a6;"></div>
<div style="position:absolute;left:1151px;top:344px;width:1px;height:27px;background:#a6a6a6;"></div>
<div style="position:absolute;left:1200px;top:344px;width:1px;height:27px;background:#a6a6a6;"></div>
<div style="position:absolute;left:1248px;top:344px;width:1px;height:27px;background:#a6a6a6;"></div>
<div style="position:absolute;left:1296px;top:344px;width:1px;height:27px;background:#a6a6a6;"></div>
<div style="position:absolute;left:1346px;top:344px;width:1px;height:27px;background:#a6a6a6;"></div>
<div style="position:absolute;left:1401px;top:344px;width:1px;height:27px;background:#a6a6a6;"></div>
<div style="position:absolute;left:1457px;top:344px;width:1px;height:27px;background:#a6a6a6;"></div>
<div style="position:absolute;left:1498px;top:344px;width:1px;height:27px;background:#a6a6a6;"></div>
<div style="position:absolute;left:43px;top:344px;width:1px;height:27px;background:#a6a6a6;"></div>
<div style="position:absolute;top:352.50px;font-size:13px;line-height:1;white-space:nowrap;color:#333;font-style:italic;left:43px;width:26px;text-align:center;">A</div>
<div style="position:absolute;top:352.50px;font-size:13px;line-height:1;white-space:nowrap;color:#333;font-style:italic;left:69px;width:76px;text-align:center;">B</div>
<div style="position:absolute;top:352.50px;font-size:13px;line-height:1;white-space:nowrap;color:#333;font-style:italic;left:150px;width:300px;text-align:center;">C</div>
<div style="position:absolute;top:352.50px;font-size:13px;line-height:1;white-space:nowrap;color:#333;font-style:italic;left:450px;width:298px;text-align:center;">D</div>
<div style="position:absolute;top:352.50px;font-size:13px;line-height:1;white-space:nowrap;color:#333;font-style:italic;left:748px;width:82px;text-align:center;">E</div>
<div style="position:absolute;top:352.50px;font-size:13px;line-height:1;white-space:nowrap;color:#333;font-style:italic;left:830px;width:52px;text-align:center;">1</div>
<div style="position:absolute;top:352.50px;font-size:13px;line-height:1;white-space:nowrap;color:#333;font-style:italic;left:882px;width:47px;text-align:center;">2</div>
<div style="position:absolute;top:352.50px;font-size:13px;line-height:1;white-space:nowrap;color:#333;font-style:italic;left:929px;width:43px;text-align:center;">3</div>
<div style="position:absolute;top:352.50px;font-size:13px;line-height:1;white-space:nowrap;color:#333;font-style:italic;left:972px;width:47px;text-align:center;">4</div>
<div style="position:absolute;top:352.50px;font-size:13px;line-height:1;white-space:nowrap;color:#333;font-style:italic;left:1019px;width:39px;text-align:center;">5</div>
<div style="position:absolute;top:352.50px;font-size:13px;line-height:1;white-space:nowrap;color:#333;font-style:italic;left:1058px;width:46px;text-align:center;">6</div>
<div style="position:absolute;top:352.50px;font-size:13px;line-height:1;white-space:nowrap;color:#333;font-style:italic;left:1104px;width:47px;text-align:center;">7</div>
<div style="position:absolute;top:352.50px;font-size:13px;line-height:1;white-space:nowrap;color:#333;font-style:italic;left:1151px;width:49px;text-align:center;">8</div>
<div style="position:absolute;top:352.50px;font-size:13px;line-height:1;white-space:nowrap;color:#333;font-style:italic;left:1200px;width:48px;text-align:center;">9</div>
<div style="position:absolute;top:352.50px;font-size:13px;line-height:1;white-space:nowrap;color:#333;font-style:italic;left:1248px;width:48px;text-align:center;">10</div>
<div style="position:absolute;top:352.50px;font-size:13px;line-height:1;white-space:nowrap;color:#333;font-style:italic;left:1296px;width:50px;text-align:center;">11</div>
<div style="position:absolute;top:352.50px;font-size:13px;line-height:1;white-space:nowrap;color:#333;font-style:italic;left:1346px;width:55px;text-align:center;">12</div>
<div style="position:absolute;top:352.50px;font-size:13px;line-height:1;white-space:nowrap;color:#333;font-style:italic;left:1401px;width:56px;text-align:center;">13</div>
<div style="position:absolute;top:352.50px;font-size:13px;line-height:1;white-space:nowrap;color:#333;font-style:italic;left:1457px;width:41px;text-align:center;">14</div>
<div style="position:absolute;top:379.79px;font-size:11px;line-height:1;white-space:nowrap;color:#5f6368;left:-14px;width:40px;text-align:center;">1726</div>
<div style="position:absolute;left:0px;top:397px;width:30px;height:1px;background:#e1e3e6;"></div>
<div style="position:absolute;top:380.13px;font-size:14.5px;line-height:1;white-space:nowrap;color:#1c2f6e;font-weight:bold;left:30px;width:13.6px;text-align:center;transform:scaleX(0.85);">8</div>
<div style="position:absolute;left:43px;top:397px;width:1455px;height:1px;background:#a6a6a6;"></div>
<div style="position:absolute;left:69px;top:375px;width:1px;height:22px;background:#a6a6a6;"></div>
<div style="position:absolute;left:450px;top:375px;width:1px;height:22px;background:#a6a6a6;"></div>
<div style="position:absolute;left:748px;top:375px;width:1px;height:22px;background:#a6a6a6;"></div>
<div style="position:absolute;left:830px;top:375px;width:1px;height:22px;background:#a6a6a6;"></div>
<div style="position:absolute;left:882px;top:375px;width:1px;height:22px;background:#a6a6a6;"></div>
<div style="position:absolute;left:929px;top:375px;width:1px;height:22px;background:#a6a6a6;"></div>
<div style="position:absolute;left:972px;top:375px;width:1px;height:22px;background:#a6a6a6;"></div>
<div style="position:absolute;left:1019px;top:375px;width:1px;height:22px;background:#a6a6a6;"></div>
<div style="position:absolute;left:1058px;top:375px;width:1px;height:22px;background:#a6a6a6;"></div>
<div style="position:absolute;left:1104px;top:375px;width:1px;height:22px;background:#a6a6a6;"></div>
<div style="position:absolute;left:1151px;top:375px;width:1px;height:22px;background:#a6a6a6;"></div>
<div style="position:absolute;left:1200px;top:375px;width:1px;height:22px;background:#a6a6a6;"></div>
<div style="position:absolute;left:1248px;top:375px;width:1px;height:22px;background:#a6a6a6;"></div>
<div style="position:absolute;left:1296px;top:375px;width:1px;height:22px;background:#a6a6a6;"></div>
<div style="position:absolute;left:1346px;top:375px;width:1px;height:22px;background:#a6a6a6;"></div>
<div style="position:absolute;left:1401px;top:375px;width:1px;height:22px;background:#a6a6a6;"></div>
<div style="position:absolute;left:1457px;top:375px;width:1px;height:22px;background:#a6a6a6;"></div>
<div style="position:absolute;left:1498px;top:375px;width:1px;height:22px;background:#a6a6a6;"></div>
<div style="position:absolute;left:43px;top:375px;width:1px;height:22px;background:#a6a6a6;"></div>
<div style="position:absolute;top:380.25px;font-size:14px;line-height:1;white-space:nowrap;color:#2f9a3c;left:43px;width:26px;text-align:center;">3</div>
<div style="position:absolute;top:380.25px;font-size:14px;line-height:1;white-space:nowrap;color:#2f9a3c;left:73.5px;">33012910</div>
<div style="position:absolute;left:151px;top:375px;width:299px;height:22px;overflow:hidden;"><div style="position:absolute;left:2px;top:-0.06px;font-size:14.25px;line-height:18px;white-space:nowrap;color:#2f9a3c;font-weight:normal;"><span style="color:#555">- - - </span>Của sả (lemon grass/citronella), hạt nhục<br>đậu khấu, cây đinh hương, cỏ hương bài</div></div>
<div style="position:absolute;left:451px;top:375px;width:297px;height:22px;overflow:hidden;"><div style="position:absolute;left:2px;top:-0.06px;font-size:14.25px;line-height:18px;white-space:nowrap;color:#2f9a3c;font-weight:normal;"><span style="color:#555">- - - </span>Of lemon grass, citronella, nutmeg,<br>clove, vetiver and other fragrances</div></div>
<div style="position:absolute;top:379.75px;font-size:14px;line-height:1;white-space:nowrap;color:#2f9a3c;left:748px;width:82px;text-align:center;">kg/lít</div>
<div style="position:absolute;left:831px;top:375px;width:51px;height:22px;overflow:hidden;"><div style="position:absolute;left:3px;top:4.75px;font-size:14px;line-height:1;white-space:nowrap;color:#2f9a3c;font-weight:normal;">7.5</div></div>
<div style="position:absolute;left:883px;top:375px;width:46px;height:22px;overflow:hidden;"><div style="position:absolute;left:3px;top:4.75px;font-size:14px;line-height:1;white-space:nowrap;color:#2f9a3c;font-weight:normal;">5</div></div>
<div style="position:absolute;left:930px;top:375px;width:42px;height:22px;overflow:hidden;"><div style="position:absolute;left:3px;top:4.75px;font-size:14px;line-height:1;white-space:nowrap;color:#2f9a3c;font-weight:normal;">10</div></div>
<div style="position:absolute;left:973px;top:375px;width:46px;height:22px;overflow:hidden;"><div style="position:absolute;left:3px;top:4.75px;font-size:14px;line-height:1;white-space:nowrap;color:#2f9a3c;font-weight:normal;">0 (-KH)</div></div>
<div style="position:absolute;left:1020px;top:375px;width:38px;height:22px;overflow:hidden;"><div style="position:absolute;left:3px;top:4.75px;font-size:14px;line-height:1;white-space:nowrap;color:#2f9a3c;font-weight:normal;">0</div></div>
<div style="position:absolute;left:1059px;top:375px;width:45px;height:22px;overflow:hidden;"><div style="position:absolute;left:3px;top:4.75px;font-size:14px;line-height:1;white-space:nowrap;color:#2f9a3c;font-weight:normal;">0</div></div>
<div style="position:absolute;left:1105px;top:375px;width:46px;height:22px;overflow:hidden;"><div style="position:absolute;left:3px;top:4.75px;font-size:14px;line-height:1;white-space:nowrap;color:#2f9a3c;font-weight:normal;">0</div></div>
<div style="position:absolute;left:1152px;top:375px;width:48px;height:22px;overflow:hidden;"><div style="position:absolute;left:3px;top:4.75px;font-size:14px;line-height:1;white-space:nowrap;color:#2f9a3c;font-weight:normal;">0</div></div>
<div style="position:absolute;left:1201px;top:375px;width:47px;height:22px;overflow:hidden;"><div style="position:absolute;left:3px;top:4.75px;font-size:14px;line-height:1;white-space:nowrap;color:#2f9a3c;font-weight:normal;">0</div></div>
<div style="position:absolute;left:1249px;top:375px;width:47px;height:22px;overflow:hidden;"><div style="position:absolute;left:3px;top:4.75px;font-size:14px;line-height:1;white-space:nowrap;color:#2f9a3c;font-weight:normal;">0</div></div>
<div style="position:absolute;left:1297px;top:375px;width:49px;height:22px;overflow:hidden;"><div style="position:absolute;left:3px;top:4.75px;font-size:14px;line-height:1;white-space:nowrap;color:#2f9a3c;font-weight:normal;">0</div></div>
<div style="position:absolute;left:1347px;top:375px;width:54px;height:22px;overflow:hidden;"><div style="position:absolute;left:3px;top:4.75px;font-size:14px;line-height:1;white-space:nowrap;color:#2f9a3c;font-weight:normal;">5</div></div>
<div style="position:absolute;left:1402px;top:375px;width:55px;height:22px;overflow:hidden;"><div style="position:absolute;left:3px;top:4.75px;font-size:14px;line-height:1;white-space:nowrap;color:#2f9a3c;font-weight:normal;">0</div></div>
<div style="position:absolute;left:1458px;top:375px;width:40px;height:22px;overflow:hidden;"><div style="position:absolute;left:3px;top:4.75px;font-size:14px;line-height:1;white-space:nowrap;color:#2f9a3c;font-weight:normal;">0</div></div>
<div style="position:absolute;top:401.92px;font-size:11px;line-height:1;white-space:nowrap;color:#5f6368;left:-14px;width:40px;text-align:center;">1727</div>
<div style="position:absolute;left:0px;top:419px;width:30px;height:1px;background:#e1e3e6;"></div>
<div style="position:absolute;top:402.26px;font-size:14.5px;line-height:1;white-space:nowrap;color:#1c2f6e;font-weight:bold;left:30px;width:13.6px;text-align:center;transform:scaleX(0.85);">8</div>
<div style="position:absolute;left:43px;top:419px;width:1455px;height:1px;background:#a6a6a6;"></div>
<div style="position:absolute;left:69px;top:397px;width:1px;height:22px;background:#a6a6a6;"></div>
<div style="position:absolute;left:450px;top:397px;width:1px;height:22px;background:#a6a6a6;"></div>
<div style="position:absolute;left:748px;top:397px;width:1px;height:22px;background:#a6a6a6;"></div>
<div style="position:absolute;left:830px;top:397px;width:1px;height:22px;background:#a6a6a6;"></div>
<div style="position:absolute;left:882px;top:397px;width:1px;height:22px;background:#a6a6a6;"></div>
<div style="position:absolute;left:929px;top:397px;width:1px;height:22px;background:#a6a6a6;"></div>
<div style="position:absolute;left:972px;top:397px;width:1px;height:22px;background:#a6a6a6;"></div>
<div style="position:absolute;left:1019px;top:397px;width:1px;height:22px;background:#a6a6a6;"></div>
<div style="position:absolute;left:1058px;top:397px;width:1px;height:22px;background:#a6a6a6;"></div>
<div style="position:absolute;left:1104px;top:397px;width:1px;height:22px;background:#a6a6a6;"></div>
<div style="position:absolute;left:1151px;top:397px;width:1px;height:22px;background:#a6a6a6;"></div>
<div style="position:absolute;left:1200px;top:397px;width:1px;height:22px;background:#a6a6a6;"></div>
<div style="position:absolute;left:1248px;top:397px;width:1px;height:22px;background:#a6a6a6;"></div>
<div style="position:absolute;left:1296px;top:397px;width:1px;height:22px;background:#a6a6a6;"></div>
<div style="position:absolute;left:1346px;top:397px;width:1px;height:22px;background:#a6a6a6;"></div>
<div style="position:absolute;left:1401px;top:397px;width:1px;height:22px;background:#a6a6a6;"></div>
<div style="position:absolute;left:1457px;top:397px;width:1px;height:22px;background:#a6a6a6;"></div>
<div style="position:absolute;left:1498px;top:397px;width:1px;height:22px;background:#a6a6a6;"></div>
<div style="position:absolute;left:43px;top:397px;width:1px;height:22px;background:#a6a6a6;"></div>
<div style="position:absolute;top:402.38px;font-size:14px;line-height:1;white-space:nowrap;color:#2f9a3c;left:43px;width:26px;text-align:center;">3</div>
<div style="position:absolute;top:402.38px;font-size:14px;line-height:1;white-space:nowrap;color:#2f9a3c;left:73.5px;">33012920</div>
<div style="position:absolute;left:151px;top:397px;width:299px;height:22px;overflow:hidden;"><div style="position:absolute;left:2px;top:4.97px;font-size:14.25px;line-height:1;white-space:nowrap;color:#2f9a3c;font-weight:normal;"><span style="color:#555">- - - </span>Của cây đàn hương</div></div>
<div style="position:absolute;left:451px;top:397px;width:297px;height:22px;overflow:hidden;"><div style="position:absolute;left:2px;top:4.97px;font-size:14.25px;line-height:1;white-space:nowrap;color:#2f9a3c;font-weight:normal;"><span style="color:#555">- - - </span>Of sandalwood</div></div>
<div style="position:absolute;top:401.88px;font-size:14px;line-height:1;white-space:nowrap;color:#2f9a3c;left:748px;width:82px;text-align:center;">kg/lít</div>
<div style="position:absolute;left:831px;top:397px;width:51px;height:22px;overflow:hidden;"><div style="position:absolute;left:3px;top:4.88px;font-size:14px;line-height:1;white-space:nowrap;color:#2f9a3c;font-weight:normal;">7.5</div></div>
<div style="position:absolute;left:883px;top:397px;width:46px;height:22px;overflow:hidden;"><div style="position:absolute;left:3px;top:4.88px;font-size:14px;line-height:1;white-space:nowrap;color:#2f9a3c;font-weight:normal;">5</div></div>
<div style="position:absolute;left:930px;top:397px;width:42px;height:22px;overflow:hidden;"><div style="position:absolute;left:3px;top:4.88px;font-size:14px;line-height:1;white-space:nowrap;color:#2f9a3c;font-weight:normal;">10</div></div>
<div style="position:absolute;left:973px;top:397px;width:46px;height:22px;overflow:hidden;"><div style="position:absolute;left:3px;top:4.88px;font-size:14px;line-height:1;white-space:nowrap;color:#2f9a3c;font-weight:normal;">0 (-KH)</div></div>
<div style="position:absolute;left:1020px;top:397px;width:38px;height:22px;overflow:hidden;"><div style="position:absolute;left:3px;top:4.88px;font-size:14px;line-height:1;white-space:nowrap;color:#2f9a3c;font-weight:normal;">0</div></div>
<div style="position:absolute;left:1059px;top:397px;width:45px;height:22px;overflow:hidden;"><div style="position:absolute;left:3px;top:4.88px;font-size:14px;line-height:1;white-space:nowrap;color:#2f9a3c;font-weight:normal;">0</div></div>
<div style="position:absolute;left:1105px;top:397px;width:46px;height:22px;overflow:hidden;"><div style="position:absolute;left:3px;top:4.88px;font-size:14px;line-height:1;white-space:nowrap;color:#2f9a3c;font-weight:normal;">0</div></div>
<div style="position:absolute;left:1152px;top:397px;width:48px;height:22px;overflow:hidden;"><div style="position:absolute;left:3px;top:4.88px;font-size:14px;line-height:1;white-space:nowrap;color:#2f9a3c;font-weight:normal;">0</div></div>
<div style="position:absolute;left:1201px;top:397px;width:47px;height:22px;overflow:hidden;"><div style="position:absolute;left:3px;top:4.88px;font-size:14px;line-height:1;white-space:nowrap;color:#2f9a3c;font-weight:normal;">0</div></div>
<div style="position:absolute;left:1249px;top:397px;width:47px;height:22px;overflow:hidden;"><div style="position:absolute;left:3px;top:4.88px;font-size:14px;line-height:1;white-space:nowrap;color:#2f9a3c;font-weight:normal;">0</div></div>
<div style="position:absolute;left:1297px;top:397px;width:49px;height:22px;overflow:hidden;"><div style="position:absolute;left:3px;top:4.88px;font-size:14px;line-height:1;white-space:nowrap;color:#2f9a3c;font-weight:normal;">0</div></div>
<div style="position:absolute;left:1347px;top:397px;width:54px;height:22px;overflow:hidden;"><div style="position:absolute;left:3px;top:4.88px;font-size:14px;line-height:1;white-space:nowrap;color:#2f9a3c;font-weight:normal;">5</div></div>
<div style="position:absolute;left:1402px;top:397px;width:55px;height:22px;overflow:hidden;"><div style="position:absolute;left:3px;top:4.88px;font-size:14px;line-height:1;white-space:nowrap;color:#2f9a3c;font-weight:normal;">0</div></div>
<div style="position:absolute;left:1458px;top:397px;width:40px;height:22px;overflow:hidden;"><div style="position:absolute;left:3px;top:4.88px;font-size:14px;line-height:1;white-space:nowrap;color:#2f9a3c;font-weight:normal;">0</div></div>
<div style="position:absolute;top:424.05px;font-size:11px;line-height:1;white-space:nowrap;color:#5f6368;left:-14px;width:40px;text-align:center;">1728</div>
<div style="position:absolute;left:0px;top:441px;width:30px;height:1px;background:#e1e3e6;"></div>
<div style="position:absolute;top:424.39px;font-size:14.5px;line-height:1;white-space:nowrap;color:#1c2f6e;font-weight:bold;left:30px;width:13.6px;text-align:center;transform:scaleX(0.85);">8</div>
<div style="position:absolute;left:43px;top:441px;width:1455px;height:1px;background:#a6a6a6;"></div>
<div style="position:absolute;left:69px;top:419px;width:1px;height:22px;background:#a6a6a6;"></div>
<div style="position:absolute;left:450px;top:419px;width:1px;height:22px;background:#a6a6a6;"></div>
<div style="position:absolute;left:748px;top:419px;width:1px;height:22px;background:#a6a6a6;"></div>
<div style="position:absolute;left:830px;top:419px;width:1px;height:22px;background:#a6a6a6;"></div>
<div style="position:absolute;left:882px;top:419px;width:1px;height:22px;background:#a6a6a6;"></div>
<div style="position:absolute;left:929px;top:419px;width:1px;height:22px;background:#a6a6a6;"></div>
<div style="position:absolute;left:972px;top:419px;width:1px;height:22px;background:#a6a6a6;"></div>
<div style="position:absolute;left:1019px;top:419px;width:1px;height:22px;background:#a6a6a6;"></div>
<div style="position:absolute;left:1058px;top:419px;width:1px;height:22px;background:#a6a6a6;"></div>
<div style="position:absolute;left:1104px;top:419px;width:1px;height:22px;background:#a6a6a6;"></div>
<div style="position:absolute;left:1151px;top:419px;width:1px;height:22px;background:#a6a6a6;"></div>
<div style="position:absolute;left:1200px;top:419px;width:1px;height:22px;background:#a6a6a6;"></div>
<div style="position:absolute;left:1248px;top:419px;width:1px;height:22px;background:#a6a6a6;"></div>
<div style="position:absolute;left:1296px;top:419px;width:1px;height:22px;background:#a6a6a6;"></div>
<div style="position:absolute;left:1346px;top:419px;width:1px;height:22px;background:#a6a6a6;"></div>
<div style="position:absolute;left:1401px;top:419px;width:1px;height:22px;background:#a6a6a6;"></div>
<div style="position:absolute;left:1457px;top:419px;width:1px;height:22px;background:#a6a6a6;"></div>
<div style="position:absolute;left:1498px;top:419px;width:1px;height:22px;background:#a6a6a6;"></div>
<div style="position:absolute;left:43px;top:419px;width:1px;height:22px;background:#a6a6a6;"></div>
<div style="position:absolute;top:424.51px;font-size:14px;line-height:1;white-space:nowrap;color:#2f9a3c;left:43px;width:26px;text-align:center;">3</div>
<div style="position:absolute;top:424.51px;font-size:14px;line-height:1;white-space:nowrap;color:#2f9a3c;left:73.5px;">33012990</div>
<div style="position:absolute;left:151px;top:419px;width:299px;height:22px;overflow:hidden;"><div style="position:absolute;left:2px;top:5.10px;font-size:14.25px;line-height:1;white-space:nowrap;color:#2f9a3c;font-weight:normal;"><span style="color:#555">- - - </span>Loại khác</div></div>
<div style="position:absolute;left:451px;top:419px;width:297px;height:22px;overflow:hidden;"><div style="position:absolute;left:2px;top:5.10px;font-size:14.25px;line-height:1;white-space:nowrap;color:#2f9a3c;font-weight:normal;"><span style="color:#555">- - - </span>Other</div></div>
<div style="position:absolute;top:424.01px;font-size:14px;line-height:1;white-space:nowrap;color:#2f9a3c;left:748px;width:82px;text-align:center;">kg/lít</div>
<div style="position:absolute;left:831px;top:419px;width:51px;height:22px;overflow:hidden;"><div style="position:absolute;left:3px;top:5.01px;font-size:14px;line-height:1;white-space:nowrap;color:#2f9a3c;font-weight:normal;">7.5</div></div>
<div style="position:absolute;left:883px;top:419px;width:46px;height:22px;overflow:hidden;"><div style="position:absolute;left:3px;top:5.01px;font-size:14px;line-height:1;white-space:nowrap;color:#2f9a3c;font-weight:normal;">5</div></div>
<div style="position:absolute;left:930px;top:419px;width:42px;height:22px;overflow:hidden;"><div style="position:absolute;left:3px;top:5.01px;font-size:14px;line-height:1;white-space:nowrap;color:#2f9a3c;font-weight:normal;">10</div></div>
<div style="position:absolute;left:973px;top:419px;width:46px;height:22px;overflow:hidden;"><div style="position:absolute;left:3px;top:5.01px;font-size:14px;line-height:1;white-space:nowrap;color:#2f9a3c;font-weight:normal;">0 (-KH)</div></div>
<div style="position:absolute;left:1020px;top:419px;width:38px;height:22px;overflow:hidden;"><div style="position:absolute;left:3px;top:5.01px;font-size:14px;line-height:1;white-space:nowrap;color:#2f9a3c;font-weight:normal;">0</div></div>
<div style="position:absolute;left:1059px;top:419px;width:45px;height:22px;overflow:hidden;"><div style="position:absolute;left:3px;top:5.01px;font-size:14px;line-height:1;white-space:nowrap;color:#2f9a3c;font-weight:normal;">0</div></div>
<div style="position:absolute;left:1105px;top:419px;width:46px;height:22px;overflow:hidden;"><div style="position:absolute;left:3px;top:5.01px;font-size:14px;line-height:1;white-space:nowrap;color:#2f9a3c;font-weight:normal;">0</div></div>
<div style="position:absolute;left:1152px;top:419px;width:48px;height:22px;overflow:hidden;"><div style="position:absolute;left:3px;top:5.01px;font-size:14px;line-height:1;white-space:nowrap;color:#2f9a3c;font-weight:normal;">0</div></div>
<div style="position:absolute;left:1201px;top:419px;width:47px;height:22px;overflow:hidden;"><div style="position:absolute;left:3px;top:5.01px;font-size:14px;line-height:1;white-space:nowrap;color:#2f9a3c;font-weight:normal;">0</div></div>
<div style="position:absolute;left:1249px;top:419px;width:47px;height:22px;overflow:hidden;"><div style="position:absolute;left:3px;top:5.01px;font-size:14px;line-height:1;white-space:nowrap;color:#2f9a3c;font-weight:normal;">0</div></div>
<div style="position:absolute;left:1297px;top:419px;width:49px;height:22px;overflow:hidden;"><div style="position:absolute;left:3px;top:5.01px;font-size:14px;line-height:1;white-space:nowrap;color:#2f9a3c;font-weight:normal;">0</div></div>
<div style="position:absolute;left:1347px;top:419px;width:54px;height:22px;overflow:hidden;"><div style="position:absolute;left:3px;top:5.01px;font-size:14px;line-height:1;white-space:nowrap;color:#2f9a3c;font-weight:normal;">5</div></div>
<div style="position:absolute;left:1402px;top:419px;width:55px;height:22px;overflow:hidden;"><div style="position:absolute;left:3px;top:5.01px;font-size:14px;line-height:1;white-space:nowrap;color:#2f9a3c;font-weight:normal;">0</div></div>
<div style="position:absolute;left:1458px;top:419px;width:40px;height:22px;overflow:hidden;"><div style="position:absolute;left:3px;top:5.01px;font-size:14px;line-height:1;white-space:nowrap;color:#2f9a3c;font-weight:normal;">0</div></div>
<div style="position:absolute;top:446.18px;font-size:11px;line-height:1;white-space:nowrap;color:#5f6368;left:-14px;width:40px;text-align:center;">1729</div>
<div style="position:absolute;left:0px;top:463px;width:30px;height:1px;background:#e1e3e6;"></div>
<div style="position:absolute;top:446.52px;font-size:14.5px;line-height:1;white-space:nowrap;color:#1c2f6e;font-weight:bold;left:30px;width:13.6px;text-align:center;transform:scaleX(0.85);">8</div>
<div style="position:absolute;left:43px;top:463px;width:1455px;height:1px;background:#a6a6a6;"></div>
<div style="position:absolute;left:69px;top:441px;width:1px;height:22px;background:#a6a6a6;"></div>
<div style="position:absolute;left:450px;top:441px;width:1px;height:22px;background:#a6a6a6;"></div>
<div style="position:absolute;left:748px;top:441px;width:1px;height:22px;background:#a6a6a6;"></div>
<div style="position:absolute;left:830px;top:441px;width:1px;height:22px;background:#a6a6a6;"></div>
<div style="position:absolute;left:882px;top:441px;width:1px;height:22px;background:#a6a6a6;"></div>
<div style="position:absolute;left:929px;top:441px;width:1px;height:22px;background:#a6a6a6;"></div>
<div style="position:absolute;left:972px;top:441px;width:1px;height:22px;background:#a6a6a6;"></div>
<div style="position:absolute;left:1019px;top:441px;width:1px;height:22px;background:#a6a6a6;"></div>
<div style="position:absolute;left:1058px;top:441px;width:1px;height:22px;background:#a6a6a6;"></div>
<div style="position:absolute;left:1104px;top:441px;width:1px;height:22px;background:#a6a6a6;"></div>
<div style="position:absolute;left:1151px;top:441px;width:1px;height:22px;background:#a6a6a6;"></div>
<div style="position:absolute;left:1200px;top:441px;width:1px;height:22px;background:#a6a6a6;"></div>
<div style="position:absolute;left:1248px;top:441px;width:1px;height:22px;background:#a6a6a6;"></div>
<div style="position:absolute;left:1296px;top:441px;width:1px;height:22px;background:#a6a6a6;"></div>
<div style="position:absolute;left:1346px;top:441px;width:1px;height:22px;background:#a6a6a6;"></div>
<div style="position:absolute;left:1401px;top:441px;width:1px;height:22px;background:#a6a6a6;"></div>
<div style="position:absolute;left:1457px;top:441px;width:1px;height:22px;background:#a6a6a6;"></div>
<div style="position:absolute;left:1498px;top:441px;width:1px;height:22px;background:#a6a6a6;"></div>
<div style="position:absolute;left:43px;top:441px;width:1px;height:22px;background:#a6a6a6;"></div>
<div style="position:absolute;top:446.64px;font-size:14px;line-height:1;white-space:nowrap;color:#4343c8;left:43px;width:26px;text-align:center;">1</div>
<div style="position:absolute;top:446.64px;font-size:14px;line-height:1;white-space:nowrap;color:#4343c8;left:73.5px;">33013000</div>
<div style="position:absolute;left:151px;top:441px;width:299px;height:22px;overflow:hidden;"><div style="position:absolute;left:2px;top:5.23px;font-size:14.25px;line-height:1;white-space:nowrap;color:#4343c8;font-weight:normal;"><span style="color:#555">- </span>Chất tựa nhựa</div></div>
<div style="position:absolute;left:451px;top:441px;width:297px;height:22px;overflow:hidden;"><div style="position:absolute;left:2px;top:5.23px;font-size:14.25px;line-height:1;white-space:nowrap;color:#4343c8;font-weight:normal;"><span style="color:#555">- </span>Resinoids</div></div>
<div style="position:absolute;top:446.14px;font-size:14px;line-height:1;white-space:nowrap;color:#4343c8;left:748px;width:82px;text-align:center;">kg/lít</div>
<div style="position:absolute;left:831px;top:441px;width:51px;height:22px;overflow:hidden;"><div style="position:absolute;left:3px;top:5.14px;font-size:14px;line-height:1;white-space:nowrap;color:#4343c8;font-weight:normal;">7.5</div></div>
<div style="position:absolute;left:883px;top:441px;width:46px;height:22px;overflow:hidden;"><div style="position:absolute;left:3px;top:5.14px;font-size:14px;line-height:1;white-space:nowrap;color:#4343c8;font-weight:normal;">5</div></div>
<div style="position:absolute;left:930px;top:441px;width:42px;height:22px;overflow:hidden;"><div style="position:absolute;left:3px;top:5.14px;font-size:14px;line-height:1;white-space:nowrap;color:#4343c8;font-weight:normal;">10</div></div>
<div style="position:absolute;left:973px;top:441px;width:46px;height:22px;overflow:hidden;"><div style="position:absolute;left:3px;top:5.14px;font-size:14px;line-height:1;white-space:nowrap;color:#4343c8;font-weight:normal;">0</div></div>
<div style="position:absolute;left:1020px;top:441px;width:38px;height:22px;overflow:hidden;"><div style="position:absolute;left:3px;top:5.14px;font-size:14px;line-height:1;white-space:nowrap;color:#4343c8;font-weight:normal;">0</div></div>
<div style="position:absolute;left:1059px;top:441px;width:45px;height:22px;overflow:hidden;"><div style="position:absolute;left:3px;top:5.14px;font-size:14px;line-height:1;white-space:nowrap;color:#4343c8;font-weight:normal;">0</div></div>
<div style="position:absolute;left:1105px;top:441px;width:46px;height:22px;overflow:hidden;"><div style="position:absolute;left:3px;top:5.14px;font-size:14px;line-height:1;white-space:nowrap;color:#4343c8;font-weight:normal;">0</div></div>
<div style="position:absolute;left:1152px;top:441px;width:48px;height:22px;overflow:hidden;"><div style="position:absolute;left:3px;top:5.14px;font-size:14px;line-height:1;white-space:nowrap;color:#4343c8;font-weight:normal;">0</div></div>
<div style="position:absolute;left:1201px;top:441px;width:47px;height:22px;overflow:hidden;"><div style="position:absolute;left:3px;top:5.14px;font-size:14px;line-height:1;white-space:nowrap;color:#4343c8;font-weight:normal;">0</div></div>
<div style="position:absolute;left:1249px;top:441px;width:47px;height:22px;overflow:hidden;"><div style="position:absolute;left:3px;top:5.14px;font-size:14px;line-height:1;white-space:nowrap;color:#4343c8;font-weight:normal;">0</div></div>
<div style="position:absolute;left:1297px;top:441px;width:49px;height:22px;overflow:hidden;"><div style="position:absolute;left:3px;top:5.14px;font-size:14px;line-height:1;white-space:nowrap;color:#4343c8;font-weight:normal;">0</div></div>
<div style="position:absolute;left:1347px;top:441px;width:54px;height:22px;overflow:hidden;"><div style="position:absolute;left:3px;top:5.14px;font-size:14px;line-height:1;white-space:nowrap;color:#4343c8;font-weight:normal;">5</div></div>
<div style="position:absolute;left:1402px;top:441px;width:55px;height:22px;overflow:hidden;"><div style="position:absolute;left:3px;top:5.14px;font-size:14px;line-height:1;white-space:nowrap;color:#4343c8;font-weight:normal;">0</div></div>
<div style="position:absolute;left:1458px;top:441px;width:40px;height:22px;overflow:hidden;"><div style="position:absolute;left:3px;top:5.14px;font-size:14px;line-height:1;white-space:nowrap;color:#4343c8;font-weight:normal;">0</div></div>
<div style="position:absolute;top:468.31px;font-size:11px;line-height:1;white-space:nowrap;color:#5f6368;left:-14px;width:40px;text-align:center;">1730</div>
<div style="position:absolute;left:0px;top:485px;width:30px;height:1px;background:#e1e3e6;"></div>
<div style="position:absolute;top:468.65px;font-size:14.5px;line-height:1;white-space:nowrap;color:#1c2f6e;font-weight:bold;left:30px;width:13.6px;text-align:center;transform:scaleX(0.85);">6</div>
<div style="position:absolute;left:43px;top:485px;width:1455px;height:1px;background:#a6a6a6;"></div>
<div style="position:absolute;left:69px;top:464px;width:1px;height:21px;background:#a6a6a6;"></div>
<div style="position:absolute;left:450px;top:464px;width:1px;height:21px;background:#a6a6a6;"></div>
<div style="position:absolute;left:748px;top:464px;width:1px;height:21px;background:#a6a6a6;"></div>
<div style="position:absolute;left:830px;top:464px;width:1px;height:21px;background:#a6a6a6;"></div>
<div style="position:absolute;left:882px;top:464px;width:1px;height:21px;background:#a6a6a6;"></div>
<div style="position:absolute;left:929px;top:464px;width:1px;height:21px;background:#a6a6a6;"></div>
<div style="position:absolute;left:972px;top:464px;width:1px;height:21px;background:#a6a6a6;"></div>
<div style="position:absolute;left:1019px;top:464px;width:1px;height:21px;background:#a6a6a6;"></div>
<div style="position:absolute;left:1058px;top:464px;width:1px;height:21px;background:#a6a6a6;"></div>
<div style="position:absolute;left:1104px;top:464px;width:1px;height:21px;background:#a6a6a6;"></div>
<div style="position:absolute;left:1151px;top:464px;width:1px;height:21px;background:#a6a6a6;"></div>
<div style="position:absolute;left:1200px;top:464px;width:1px;height:21px;background:#a6a6a6;"></div>
<div style="position:absolute;left:1248px;top:464px;width:1px;height:21px;background:#a6a6a6;"></div>
<div style="position:absolute;left:1296px;top:464px;width:1px;height:21px;background:#a6a6a6;"></div>
<div style="position:absolute;left:1346px;top:464px;width:1px;height:21px;background:#a6a6a6;"></div>
<div style="position:absolute;left:1401px;top:464px;width:1px;height:21px;background:#a6a6a6;"></div>
<div style="position:absolute;left:1457px;top:464px;width:1px;height:21px;background:#a6a6a6;"></div>
<div style="position:absolute;left:1498px;top:464px;width:1px;height:21px;background:#a6a6a6;"></div>
<div style="position:absolute;left:43px;top:464px;width:1px;height:21px;background:#a6a6a6;"></div>
<div style="position:absolute;top:468.77px;font-size:14px;line-height:1;white-space:nowrap;color:#4343c8;left:43px;width:26px;text-align:center;">1</div>
<div style="position:absolute;top:468.77px;font-size:14px;line-height:1;white-space:nowrap;color:#4343c8;left:73.5px;">330190</div>
<div style="position:absolute;left:151px;top:464px;width:299px;height:21px;overflow:hidden;"><div style="position:absolute;left:2px;top:4.36px;font-size:14.25px;line-height:1;white-space:nowrap;color:#4343c8;font-weight:normal;"><span style="color:#555">- </span>Loại khác:</div></div>
<div style="position:absolute;left:451px;top:464px;width:297px;height:21px;overflow:hidden;"><div style="position:absolute;left:2px;top:4.36px;font-size:14.25px;line-height:1;white-space:nowrap;color:#4343c8;font-weight:normal;"><span style="color:#555">- </span>Other:</div></div>
<div style="position:absolute;top:490.44px;font-size:11px;line-height:1;white-space:nowrap;color:#5f6368;left:-14px;width:40px;text-align:center;">1731</div>
<div style="position:absolute;left:0px;top:507px;width:30px;height:1px;background:#e1e3e6;"></div>
<div style="position:absolute;top:490.78px;font-size:14.5px;line-height:1;white-space:nowrap;color:#1c2f6e;font-weight:bold;left:30px;width:13.6px;text-align:center;transform:scaleX(0.85);">8</div>
<div style="position:absolute;left:43px;top:507px;width:1455px;height:1px;background:#a6a6a6;"></div>
<div style="position:absolute;left:69px;top:486px;width:1px;height:21px;background:#a6a6a6;"></div>
<div style="position:absolute;left:450px;top:486px;width:1px;height:21px;background:#a6a6a6;"></div>
<div style="position:absolute;left:748px;top:486px;width:1px;height:21px;background:#a6a6a6;"></div>
<div style="position:absolute;left:830px;top:486px;width:1px;height:21px;background:#a6a6a6;"></div>
<div style="position:absolute;left:882px;top:486px;width:1px;height:21px;background:#a6a6a6;"></div>
<div style="position:absolute;left:929px;top:486px;width:1px;height:21px;background:#a6a6a6;"></div>
<div style="position:absolute;left:972px;top:486px;width:1px;height:21px;background:#a6a6a6;"></div>
<div style="position:absolute;left:1019px;top:486px;width:1px;height:21px;background:#a6a6a6;"></div>
<div style="position:absolute;left:1058px;top:486px;width:1px;height:21px;background:#a6a6a6;"></div>
<div style="position:absolute;left:1104px;top:486px;width:1px;height:21px;background:#a6a6a6;"></div>
<div style="position:absolute;left:1151px;top:486px;width:1px;height:21px;background:#a6a6a6;"></div>
<div style="position:absolute;left:1200px;top:486px;width:1px;height:21px;background:#a6a6a6;"></div>
<div style="position:absolute;left:1248px;top:486px;width:1px;height:21px;background:#a6a6a6;"></div>
<div style="position:absolute;left:1296px;top:486px;width:1px;height:21px;background:#a6a6a6;"></div>
<div style="position:absolute;left:1346px;top:486px;width:1px;height:21px;background:#a6a6a6;"></div>
<div style="position:absolute;left:1401px;top:486px;width:1px;height:21px;background:#a6a6a6;"></div>
<div style="position:absolute;left:1457px;top:486px;width:1px;height:21px;background:#a6a6a6;"></div>
<div style="position:absolute;left:1498px;top:486px;width:1px;height:21px;background:#a6a6a6;"></div>
<div style="position:absolute;left:43px;top:486px;width:1px;height:21px;background:#a6a6a6;"></div>
<div style="position:absolute;top:490.90px;font-size:14px;line-height:1;white-space:nowrap;color:#b8323c;left:43px;width:26px;text-align:center;">2</div>
<div style="position:absolute;top:490.90px;font-size:14px;line-height:1;white-space:nowrap;color:#b8323c;left:73.5px;">33019010</div>
<div style="position:absolute;left:151px;top:486px;width:299px;height:21px;overflow:hidden;"><div style="position:absolute;left:2px;top:-0.41px;font-size:14.25px;line-height:18px;white-space:nowrap;color:#b8323c;font-weight:normal;"><span style="color:#555">- - </span>Nước cất và dung dịch nước của các loại<br>tinh dầu, chế phẩm dùng trong y tế</div></div>
<div style="position:absolute;left:451px;top:486px;width:297px;height:21px;overflow:hidden;"><div style="position:absolute;left:2px;top:-0.41px;font-size:14.25px;line-height:18px;white-space:nowrap;color:#b8323c;font-weight:normal;"><span style="color:#555">- - </span>Aqueous distillates and aqueous solutions<br>of essential oils, medicinal preparations</div></div>
<div style="position:absolute;top:490.40px;font-size:14px;line-height:1;white-space:nowrap;color:#b8323c;left:748px;width:82px;text-align:center;">kg/lít</div>
<div style="position:absolute;left:831px;top:486px;width:51px;height:21px;overflow:hidden;"><div style="position:absolute;left:3px;top:4.40px;font-size:14px;line-height:1;white-space:nowrap;color:#b8323c;font-weight:normal;">7.5</div></div>
<div style="position:absolute;left:883px;top:486px;width:46px;height:21px;overflow:hidden;"><div style="position:absolute;left:3px;top:4.40px;font-size:14px;line-height:1;white-space:nowrap;color:#b8323c;font-weight:normal;">5</div></div>
<div style="position:absolute;left:930px;top:486px;width:42px;height:21px;overflow:hidden;"><div style="position:absolute;left:3px;top:4.40px;font-size:14px;line-height:1;white-space:nowrap;color:#b8323c;font-weight:normal;">5</div></div>
<div style="position:absolute;left:973px;top:486px;width:46px;height:21px;overflow:hidden;"><div style="position:absolute;left:3px;top:4.40px;font-size:14px;line-height:1;white-space:nowrap;color:#b8323c;font-weight:normal;">0</div></div>
<div style="position:absolute;left:1020px;top:486px;width:38px;height:21px;overflow:hidden;"><div style="position:absolute;left:3px;top:4.40px;font-size:14px;line-height:1;white-space:nowrap;color:#b8323c;font-weight:normal;">0</div></div>
<div style="position:absolute;left:1059px;top:486px;width:45px;height:21px;overflow:hidden;"><div style="position:absolute;left:3px;top:4.40px;font-size:14px;line-height:1;white-space:nowrap;color:#b8323c;font-weight:normal;">0</div></div>
<div style="position:absolute;left:1105px;top:486px;width:46px;height:21px;overflow:hidden;"><div style="position:absolute;left:3px;top:4.40px;font-size:14px;line-height:1;white-space:nowrap;color:#b8323c;font-weight:normal;">0</div></div>
<div style="position:absolute;left:1152px;top:486px;width:48px;height:21px;overflow:hidden;"><div style="position:absolute;left:3px;top:4.40px;font-size:14px;line-height:1;white-space:nowrap;color:#b8323c;font-weight:normal;">0</div></div>
<div style="position:absolute;left:1201px;top:486px;width:47px;height:21px;overflow:hidden;"><div style="position:absolute;left:3px;top:4.40px;font-size:14px;line-height:1;white-space:nowrap;color:#b8323c;font-weight:normal;">0</div></div>
<div style="position:absolute;left:1249px;top:486px;width:47px;height:21px;overflow:hidden;"><div style="position:absolute;left:3px;top:4.40px;font-size:14px;line-height:1;white-space:nowrap;color:#b8323c;font-weight:normal;">0</div></div>
<div style="position:absolute;left:1297px;top:486px;width:49px;height:21px;overflow:hidden;"><div style="position:absolute;left:3px;top:4.40px;font-size:14px;line-height:1;white-space:nowrap;color:#b8323c;font-weight:normal;">0</div></div>
<div style="position:absolute;left:1347px;top:486px;width:54px;height:21px;overflow:hidden;"><div style="position:absolute;left:3px;top:4.40px;font-size:14px;line-height:1;white-space:nowrap;color:#b8323c;font-weight:normal;">5</div></div>
<div style="position:absolute;left:1402px;top:486px;width:55px;height:21px;overflow:hidden;"><div style="position:absolute;left:3px;top:4.40px;font-size:14px;line-height:1;white-space:nowrap;color:#b8323c;font-weight:normal;">0</div></div>
<div style="position:absolute;left:1458px;top:486px;width:40px;height:21px;overflow:hidden;"><div style="position:absolute;left:3px;top:4.40px;font-size:14px;line-height:1;white-space:nowrap;color:#b8323c;font-weight:normal;">0</div></div>
<div style="position:absolute;top:512.57px;font-size:11px;line-height:1;white-space:nowrap;color:#5f6368;left:-14px;width:40px;text-align:center;">1732</div>
<div style="position:absolute;left:0px;top:529px;width:30px;height:1px;background:#e1e3e6;"></div>
<div style="position:absolute;top:512.91px;font-size:14.5px;line-height:1;white-space:nowrap;color:#1c2f6e;font-weight:bold;left:30px;width:13.6px;text-align:center;transform:scaleX(0.85);">8</div>
<div style="position:absolute;left:43px;top:529px;width:1455px;height:1px;background:#a6a6a6;"></div>
<div style="position:absolute;left:69px;top:508px;width:1px;height:21px;background:#a6a6a6;"></div>
<div style="position:absolute;left:450px;top:508px;width:1px;height:21px;background:#a6a6a6;"></div>
<div style="position:absolute;left:748px;top:508px;width:1px;height:21px;background:#a6a6a6;"></div>
<div style="position:absolute;left:830px;top:508px;width:1px;height:21px;background:#a6a6a6;"></div>
<div style="position:absolute;left:882px;top:508px;width:1px;height:21px;background:#a6a6a6;"></div>
<div style="position:absolute;left:929px;top:508px;width:1px;height:21px;background:#a6a6a6;"></div>
<div style="position:absolute;left:972px;top:508px;width:1px;height:21px;background:#a6a6a6;"></div>
<div style="position:absolute;left:1019px;top:508px;width:1px;height:21px;background:#a6a6a6;"></div>
<div style="position:absolute;left:1058px;top:508px;width:1px;height:21px;background:#a6a6a6;"></div>
<div style="position:absolute;left:1104px;top:508px;width:1px;height:21px;background:#a6a6a6;"></div>
<div style="position:absolute;left:1151px;top:508px;width:1px;height:21px;background:#a6a6a6;"></div>
<div style="position:absolute;left:1200px;top:508px;width:1px;height:21px;background:#a6a6a6;"></div>
<div style="position:absolute;left:1248px;top:508px;width:1px;height:21px;background:#a6a6a6;"></div>
<div style="position:absolute;left:1296px;top:508px;width:1px;height:21px;background:#a6a6a6;"></div>
<div style="position:absolute;left:1346px;top:508px;width:1px;height:21px;background:#a6a6a6;"></div>
<div style="position:absolute;left:1401px;top:508px;width:1px;height:21px;background:#a6a6a6;"></div>
<div style="position:absolute;left:1457px;top:508px;width:1px;height:21px;background:#a6a6a6;"></div>
<div style="position:absolute;left:1498px;top:508px;width:1px;height:21px;background:#a6a6a6;"></div>
<div style="position:absolute;left:43px;top:508px;width:1px;height:21px;background:#a6a6a6;"></div>
<div style="position:absolute;top:513.03px;font-size:14px;line-height:1;white-space:nowrap;color:#b8323c;left:43px;width:26px;text-align:center;">2</div>
<div style="position:absolute;top:513.03px;font-size:14px;line-height:1;white-space:nowrap;color:#b8323c;left:73.5px;">33019090</div>
<div style="position:absolute;left:151px;top:508px;width:299px;height:21px;overflow:hidden;"><div style="position:absolute;left:2px;top:4.62px;font-size:14.25px;line-height:1;white-space:nowrap;color:#b8323c;font-weight:normal;"><span style="color:#555">- - </span>Loại khác</div></div>
<div style="position:absolute;left:451px;top:508px;width:297px;height:21px;overflow:hidden;"><div style="position:absolute;left:2px;top:4.62px;font-size:14.25px;line-height:1;white-space:nowrap;color:#b8323c;font-weight:normal;"><span style="color:#555">- - </span>Other</div></div>
<div style="position:absolute;top:512.53px;font-size:14px;line-height:1;white-space:nowrap;color:#b8323c;left:748px;width:82px;text-align:center;">kg/lít</div>
<div style="position:absolute;left:831px;top:508px;width:51px;height:21px;overflow:hidden;"><div style="position:absolute;left:3px;top:4.53px;font-size:14px;line-height:1;white-space:nowrap;color:#b8323c;font-weight:normal;">7.5</div></div>
<div style="position:absolute;left:883px;top:508px;width:46px;height:21px;overflow:hidden;"><div style="position:absolute;left:3px;top:4.53px;font-size:14px;line-height:1;white-space:nowrap;color:#b8323c;font-weight:normal;">5</div></div>
<div style="position:absolute;left:930px;top:508px;width:42px;height:21px;overflow:hidden;"><div style="position:absolute;left:3px;top:4.53px;font-size:14px;line-height:1;white-space:nowrap;color:#b8323c;font-weight:normal;">10</div></div>
<div style="position:absolute;left:973px;top:508px;width:46px;height:21px;overflow:hidden;"><div style="position:absolute;left:3px;top:4.53px;font-size:14px;line-height:1;white-space:nowrap;color:#b8323c;font-weight:normal;">0</div></div>
<div style="position:absolute;left:1020px;top:508px;width:38px;height:21px;overflow:hidden;"><div style="position:absolute;left:3px;top:4.53px;font-size:14px;line-height:1;white-space:nowrap;color:#b8323c;font-weight:normal;">0</div></div>
<div style="position:absolute;left:1059px;top:508px;width:45px;height:21px;overflow:hidden;"><div style="position:absolute;left:3px;top:4.53px;font-size:14px;line-height:1;white-space:nowrap;color:#b8323c;font-weight:normal;">0</div></div>
<div style="position:absolute;left:1105px;top:508px;width:46px;height:21px;overflow:hidden;"><div style="position:absolute;left:3px;top:4.53px;font-size:14px;line-height:1;white-space:nowrap;color:#b8323c;font-weight:normal;">0</div></div>
<div style="position:absolute;left:1152px;top:508px;width:48px;height:21px;overflow:hidden;"><div style="position:absolute;left:3px;top:4.53px;font-size:14px;line-height:1;white-space:nowrap;color:#b8323c;font-weight:normal;">0</div></div>
<div style="position:absolute;left:1201px;top:508px;width:47px;height:21px;overflow:hidden;"><div style="position:absolute;left:3px;top:4.53px;font-size:14px;line-height:1;white-space:nowrap;color:#b8323c;font-weight:normal;">0</div></div>
<div style="position:absolute;left:1249px;top:508px;width:47px;height:21px;overflow:hidden;"><div style="position:absolute;left:3px;top:4.53px;font-size:14px;line-height:1;white-space:nowrap;color:#b8323c;font-weight:normal;">0</div></div>
<div style="position:absolute;left:1297px;top:508px;width:49px;height:21px;overflow:hidden;"><div style="position:absolute;left:3px;top:4.53px;font-size:14px;line-height:1;white-space:nowrap;color:#b8323c;font-weight:normal;">0</div></div>
<div style="position:absolute;left:1347px;top:508px;width:54px;height:21px;overflow:hidden;"><div style="position:absolute;left:3px;top:4.53px;font-size:14px;line-height:1;white-space:nowrap;color:#b8323c;font-weight:normal;">5</div></div>
<div style="position:absolute;left:1402px;top:508px;width:55px;height:21px;overflow:hidden;"><div style="position:absolute;left:3px;top:4.53px;font-size:14px;line-height:1;white-space:nowrap;color:#b8323c;font-weight:normal;">0</div></div>
<div style="position:absolute;left:1458px;top:508px;width:40px;height:21px;overflow:hidden;"><div style="position:absolute;left:3px;top:4.53px;font-size:14px;line-height:1;white-space:nowrap;color:#b8323c;font-weight:normal;">0</div></div>
<div style="position:absolute;top:534.70px;font-size:11px;line-height:1;white-space:nowrap;color:#5f6368;left:-14px;width:40px;text-align:center;">1733</div>
<div style="position:absolute;left:0px;top:552px;width:30px;height:1px;background:#e1e3e6;"></div>
<div style="position:absolute;top:535.04px;font-size:14.5px;line-height:1;white-space:nowrap;color:#1c2f6e;font-weight:bold;left:30px;width:13.6px;text-align:center;transform:scaleX(0.85);">4</div>
<div style="position:absolute;left:43px;top:552px;width:1455px;height:1px;background:#a6a6a6;"></div>
<div style="position:absolute;left:69px;top:530px;width:1px;height:22px;background:#a6a6a6;"></div>
<div style="position:absolute;left:450px;top:530px;width:1px;height:22px;background:#a6a6a6;"></div>
<div style="position:absolute;left:748px;top:530px;width:1px;height:22px;background:#a6a6a6;"></div>
<div style="position:absolute;left:830px;top:530px;width:1px;height:22px;background:#a6a6a6;"></div>
<div style="position:absolute;left:882px;top:530px;width:1px;height:22px;background:#a6a6a6;"></div>
<div style="position:absolute;left:929px;top:530px;width:1px;height:22px;background:#a6a6a6;"></div>
<div style="position:absolute;left:972px;top:530px;width:1px;height:22px;background:#a6a6a6;"></div>
<div style="position:absolute;left:1019px;top:530px;width:1px;height:22px;background:#a6a6a6;"></div>
<div style="position:absolute;left:1058px;top:530px;width:1px;height:22px;background:#a6a6a6;"></div>
<div style="position:absolute;left:1104px;top:530px;width:1px;height:22px;background:#a6a6a6;"></div>
<div style="position:absolute;left:1151px;top:530px;width:1px;height:22px;background:#a6a6a6;"></div>
<div style="position:absolute;left:1200px;top:530px;width:1px;height:22px;background:#a6a6a6;"></div>
<div style="position:absolute;left:1248px;top:530px;width:1px;height:22px;background:#a6a6a6;"></div>
<div style="position:absolute;left:1296px;top:530px;width:1px;height:22px;background:#a6a6a6;"></div>
<div style="position:absolute;left:1346px;top:530px;width:1px;height:22px;background:#a6a6a6;"></div>
<div style="position:absolute;left:1401px;top:530px;width:1px;height:22px;background:#a6a6a6;"></div>
<div style="position:absolute;left:1457px;top:530px;width:1px;height:22px;background:#a6a6a6;"></div>
<div style="position:absolute;left:1498px;top:530px;width:1px;height:22px;background:#a6a6a6;"></div>
<div style="position:absolute;left:43px;top:530px;width:1px;height:22px;background:#a6a6a6;"></div>
<div style="position:absolute;top:535.16px;font-size:14px;line-height:1;white-space:nowrap;color:#1c2f6e;font-weight:bold;left:43px;width:26px;text-align:center;"></div>
<div style="position:absolute;top:535.16px;font-size:14px;line-height:1;white-space:nowrap;color:#1c2f6e;font-weight:bold;left:73.5px;">3302</div>
<div style="position:absolute;left:151px;top:530px;width:299px;height:22px;overflow:hidden;"><div style="position:absolute;left:2px;top:-0.15px;font-size:14.25px;line-height:18px;white-space:nowrap;color:#1c2f6e;font-weight:bold;">Hỗn hợp các chất thơm và các hỗn hợp (kể<br>cả dung dịch có cồn) với thành phần chủ</div></div>
<div style="position:absolute;left:451px;top:530px;width:297px;height:22px;overflow:hidden;"><div style="position:absolute;left:2px;top:-0.15px;font-size:14.25px;line-height:18px;white-space:nowrap;color:#1c2f6e;font-weight:bold;">Mixtures of odoriferous substances and<br>mixtures (including alcoholic solutions)</div></div>
<div style="position:absolute;top:556.83px;font-size:11px;line-height:1;white-space:nowrap;color:#5f6368;left:-14px;width:40px;text-align:center;">1734</div>
<div style="position:absolute;left:0px;top:574px;width:30px;height:1px;background:#e1e3e6;"></div>
<div style="position:absolute;top:557.17px;font-size:14.5px;line-height:1;white-space:nowrap;color:#1c2f6e;font-weight:bold;left:30px;width:13.6px;text-align:center;transform:scaleX(0.85);">6</div>
<div style="position:absolute;left:43px;top:574px;width:1455px;height:1px;background:#a6a6a6;"></div>
<div style="position:absolute;left:69px;top:552px;width:1px;height:22px;background:#a6a6a6;"></div>
<div style="position:absolute;left:450px;top:552px;width:1px;height:22px;background:#a6a6a6;"></div>
<div style="position:absolute;left:748px;top:552px;width:1px;height:22px;background:#a6a6a6;"></div>
<div style="position:absolute;left:830px;top:552px;width:1px;height:22px;background:#a6a6a6;"></div>
<div style="position:absolute;left:882px;top:552px;width:1px;height:22px;background:#a6a6a6;"></div>
<div style="position:absolute;left:929px;top:552px;width:1px;height:22px;background:#a6a6a6;"></div>
<div style="position:absolute;left:972px;top:552px;width:1px;height:22px;background:#a6a6a6;"></div>
<div style="position:absolute;left:1019px;top:552px;width:1px;height:22px;background:#a6a6a6;"></div>
<div style="position:absolute;left:1058px;top:552px;width:1px;height:22px;background:#a6a6a6;"></div>
<div style="position:absolute;left:1104px;top:552px;width:1px;height:22px;background:#a6a6a6;"></div>
<div style="position:absolute;left:1151px;top:552px;width:1px;height:22px;background:#a6a6a6;"></div>
<div style="position:absolute;left:1200px;top:552px;width:1px;height:22px;background:#a6a6a6;"></div>
<div style="position:absolute;left:1248px;top:552px;width:1px;height:22px;background:#a6a6a6;"></div>
<div style="position:absolute;left:1296px;top:552px;width:1px;height:22px;background:#a6a6a6;"></div>
<div style="position:absolute;left:1346px;top:552px;width:1px;height:22px;background:#a6a6a6;"></div>
<div style="position:absolute;left:1401px;top:552px;width:1px;height:22px;background:#a6a6a6;"></div>
<div style="position:absolute;left:1457px;top:552px;width:1px;height:22px;background:#a6a6a6;"></div>
<div style="position:absolute;left:1498px;top:552px;width:1px;height:22px;background:#a6a6a6;"></div>
<div style="position:absolute;left:43px;top:552px;width:1px;height:22px;background:#a6a6a6;"></div>
<div style="position:absolute;top:557.29px;font-size:14px;line-height:1;white-space:nowrap;color:#4343c8;left:43px;width:26px;text-align:center;">1</div>
<div style="position:absolute;top:557.29px;font-size:14px;line-height:1;white-space:nowrap;color:#4343c8;left:73.5px;">330210</div>
<div style="position:absolute;left:151px;top:552px;width:299px;height:22px;overflow:hidden;"><div style="position:absolute;left:2px;top:-0.02px;font-size:14.25px;line-height:18px;white-space:nowrap;color:#4343c8;font-weight:normal;"><span style="color:#555">- </span>Loại dùng trong công nghiệp thực phẩm<br>hoặc đồ uống:</div></div>
<div style="position:absolute;left:451px;top:552px;width:297px;height:22px;overflow:hidden;"><div style="position:absolute;left:2px;top:4.88px;font-size:14.25px;line-height:1;white-space:nowrap;color:#4343c8;font-weight:normal;"><span style="color:#555">- </span>Of a kind used in the food or drink industries:</div></div>
<div style="position:absolute;top:578.96px;font-size:11px;line-height:1;white-space:nowrap;color:#5f6368;left:-14px;width:40px;text-align:center;">1735</div>
<div style="position:absolute;left:0px;top:596px;width:30px;height:1px;background:#e1e3e6;"></div>
<div style="position:absolute;top:579.30px;font-size:14.5px;line-height:1;white-space:nowrap;color:#1c2f6e;font-weight:bold;left:30px;width:13.6px;text-align:center;transform:scaleX(0.85);">8</div>
<div style="position:absolute;left:43px;top:596px;width:1455px;height:1px;background:#a6a6a6;"></div>
<div style="position:absolute;left:69px;top:574px;width:1px;height:22px;background:#a6a6a6;"></div>
<div style="position:absolute;left:450px;top:574px;width:1px;height:22px;background:#a6a6a6;"></div>
<div style="position:absolute;left:748px;top:574px;width:1px;height:22px;background:#a6a6a6;"></div>
<div style="position:absolute;left:830px;top:574px;width:1px;height:22px;background:#a6a6a6;"></div>
<div style="position:absolute;left:882px;top:574px;width:1px;height:22px;background:#a6a6a6;"></div>
<div style="position:absolute;left:929px;top:574px;width:1px;height:22px;background:#a6a6a6;"></div>
<div style="position:absolute;left:972px;top:574px;width:1px;height:22px;background:#a6a6a6;"></div>
<div style="position:absolute;left:1019px;top:574px;width:1px;height:22px;background:#a6a6a6;"></div>
<div style="position:absolute;left:1058px;top:574px;width:1px;height:22px;background:#a6a6a6;"></div>
<div style="position:absolute;left:1104px;top:574px;width:1px;height:22px;background:#a6a6a6;"></div>
<div style="position:absolute;left:1151px;top:574px;width:1px;height:22px;background:#a6a6a6;"></div>
<div style="position:absolute;left:1200px;top:574px;width:1px;height:22px;background:#a6a6a6;"></div>
<div style="position:absolute;left:1248px;top:574px;width:1px;height:22px;background:#a6a6a6;"></div>
<div style="position:absolute;left:1296px;top:574px;width:1px;height:22px;background:#a6a6a6;"></div>
<div style="position:absolute;left:1346px;top:574px;width:1px;height:22px;background:#a6a6a6;"></div>
<div style="position:absolute;left:1401px;top:574px;width:1px;height:22px;background:#a6a6a6;"></div>
<div style="position:absolute;left:1457px;top:574px;width:1px;height:22px;background:#a6a6a6;"></div>
<div style="position:absolute;left:1498px;top:574px;width:1px;height:22px;background:#a6a6a6;"></div>
<div style="position:absolute;left:43px;top:574px;width:1px;height:22px;background:#a6a6a6;"></div>
<div style="position:absolute;top:579.42px;font-size:14px;line-height:1;white-space:nowrap;color:#b8323c;left:43px;width:26px;text-align:center;">2</div>
<div style="position:absolute;top:579.42px;font-size:14px;line-height:1;white-space:nowrap;color:#b8323c;left:73.5px;">33021010</div>
<div style="position:absolute;left:151px;top:574px;width:299px;height:22px;overflow:hidden;"><div style="position:absolute;left:2px;top:0.11px;font-size:14.25px;line-height:18px;white-space:nowrap;color:#b8323c;font-weight:normal;"><span style="color:#555">- - </span>Chế phẩm rượu thơm, loại dùng để sản<br>xuất đồ uống có cồn, ở dạng lỏng</div></div>
<div style="position:absolute;left:451px;top:574px;width:297px;height:22px;overflow:hidden;"><div style="position:absolute;left:2px;top:0.11px;font-size:14.25px;line-height:18px;white-space:nowrap;color:#b8323c;font-weight:normal;"><span style="color:#555">- - </span>Odoriferous alcoholic preparations of a<br>kind used in the manufacture of alcoholic</div></div>
<div style="position:absolute;top:578.92px;font-size:14px;line-height:1;white-space:nowrap;color:#b8323c;left:748px;width:82px;text-align:center;">kg/lít</div>
<div style="position:absolute;left:831px;top:574px;width:51px;height:22px;overflow:hidden;"><div style="position:absolute;left:3px;top:4.92px;font-size:14px;line-height:1;white-space:nowrap;color:#b8323c;font-weight:normal;">15</div></div>
<div style="position:absolute;left:883px;top:574px;width:46px;height:22px;overflow:hidden;"><div style="position:absolute;left:3px;top:4.92px;font-size:14px;line-height:1;white-space:nowrap;color:#b8323c;font-weight:normal;">10</div></div>
<div style="position:absolute;left:930px;top:574px;width:42px;height:22px;overflow:hidden;"><div style="position:absolute;left:3px;top:4.92px;font-size:14px;line-height:1;white-space:nowrap;color:#b8323c;font-weight:normal;">10</div></div>
<div style="position:absolute;left:973px;top:574px;width:46px;height:22px;overflow:hidden;"><div style="position:absolute;left:3px;top:4.92px;font-size:14px;line-height:1;white-space:nowrap;color:#b8323c;font-weight:normal;">0</div></div>
<div style="position:absolute;left:1020px;top:574px;width:38px;height:22px;overflow:hidden;"><div style="position:absolute;left:3px;top:4.92px;font-size:14px;line-height:1;white-space:nowrap;color:#b8323c;font-weight:normal;">0</div></div>
<div style="position:absolute;left:1059px;top:574px;width:45px;height:22px;overflow:hidden;"><div style="position:absolute;left:3px;top:4.92px;font-size:14px;line-height:1;white-space:nowrap;color:#b8323c;font-weight:normal;">0</div></div>
<div style="position:absolute;left:1105px;top:574px;width:46px;height:22px;overflow:hidden;"><div style="position:absolute;left:3px;top:4.92px;font-size:14px;line-height:1;white-space:nowrap;color:#b8323c;font-weight:normal;">0</div></div>
<div style="position:absolute;left:1152px;top:574px;width:48px;height:22px;overflow:hidden;"><div style="position:absolute;left:3px;top:4.92px;font-size:14px;line-height:1;white-space:nowrap;color:#b8323c;font-weight:normal;">0(-ID, MY)</div></div>
<div style="position:absolute;left:1201px;top:574px;width:47px;height:22px;overflow:hidden;"><div style="position:absolute;left:3px;top:4.92px;font-size:14px;line-height:1;white-space:nowrap;color:#b8323c;font-weight:normal;">0</div></div>
<div style="position:absolute;left:1249px;top:574px;width:47px;height:22px;overflow:hidden;"><div style="position:absolute;left:3px;top:4.92px;font-size:14px;line-height:1;white-space:nowrap;color:#b8323c;font-weight:normal;">0</div></div>
<div style="position:absolute;left:1297px;top:574px;width:49px;height:22px;overflow:hidden;"><div style="position:absolute;left:3px;top:4.92px;font-size:14px;line-height:1;white-space:nowrap;color:#b8323c;font-weight:normal;">0</div></div>
<div style="position:absolute;left:1347px;top:574px;width:54px;height:22px;overflow:hidden;"><div style="position:absolute;left:3px;top:4.92px;font-size:14px;line-height:1;white-space:nowrap;color:#b8323c;font-weight:normal;">3</div></div>
<div style="position:absolute;left:1402px;top:574px;width:55px;height:22px;overflow:hidden;"><div style="position:absolute;left:3px;top:4.92px;font-size:14px;line-height:1;white-space:nowrap;color:#b8323c;font-weight:normal;">0</div></div>
<div style="position:absolute;left:1458px;top:574px;width:40px;height:22px;overflow:hidden;"><div style="position:absolute;left:3px;top:4.92px;font-size:14px;line-height:1;white-space:nowrap;color:#b8323c;font-weight:normal;">M: 2,5</div></div>
<div style="position:absolute;top:601.09px;font-size:11px;line-height:1;white-space:nowrap;color:#5f6368;left:-14px;width:40px;text-align:center;">1736</div>
<div style="position:absolute;left:0px;top:618px;width:30px;height:1px;background:#e1e3e6;"></div>
<div style="position:absolute;top:601.43px;font-size:14.5px;line-height:1;white-space:nowrap;color:#1c2f6e;font-weight:bold;left:30px;width:13.6px;text-align:center;transform:scaleX(0.85);">8</div>
<div style="position:absolute;left:43px;top:618px;width:1455px;height:1px;background:#a6a6a6;"></div>
<div style="position:absolute;left:69px;top:596px;width:1px;height:22px;background:#a6a6a6;"></div>
<div style="position:absolute;left:450px;top:596px;width:1px;height:22px;background:#a6a6a6;"></div>
<div style="position:absolute;left:748px;top:596px;width:1px;height:22px;background:#a6a6a6;"></div>
<div style="position:absolute;left:830px;top:596px;width:1px;height:22px;background:#a6a6a6;"></div>
<div style="position:absolute;left:882px;top:596px;width:1px;height:22px;background:#a6a6a6;"></div>
<div style="position:absolute;left:929px;top:596px;width:1px;height:22px;background:#a6a6a6;"></div>
<div style="position:absolute;left:972px;top:596px;width:1px;height:22px;background:#a6a6a6;"></div>
<div style="position:absolute;left:1019px;top:596px;width:1px;height:22px;background:#a6a6a6;"></div>
<div style="position:absolute;left:1058px;top:596px;width:1px;height:22px;background:#a6a6a6;"></div>
<div style="position:absolute;left:1104px;top:596px;width:1px;height:22px;background:#a6a6a6;"></div>
<div style="position:absolute;left:1151px;top:596px;width:1px;height:22px;background:#a6a6a6;"></div>
<div style="position:absolute;left:1200px;top:596px;width:1px;height:22px;background:#a6a6a6;"></div>
<div style="position:absolute;left:1248px;top:596px;width:1px;height:22px;background:#a6a6a6;"></div>
<div style="position:absolute;left:1296px;top:596px;width:1px;height:22px;background:#a6a6a6;"></div>
<div style="position:absolute;left:1346px;top:596px;width:1px;height:22px;background:#a6a6a6;"></div>
<div style="position:absolute;left:1401px;top:596px;width:1px;height:22px;background:#a6a6a6;"></div>
<div style="position:absolute;left:1457px;top:596px;width:1px;height:22px;background:#a6a6a6;"></div>
<div style="position:absolute;left:1498px;top:596px;width:1px;height:22px;background:#a6a6a6;"></div>
<div style="position:absolute;left:43px;top:596px;width:1px;height:22px;background:#a6a6a6;"></div>
<div style="position:absolute;top:601.55px;font-size:14px;line-height:1;white-space:nowrap;color:#b8323c;left:43px;width:26px;text-align:center;">2</div>
<div style="position:absolute;top:601.55px;font-size:14px;line-height:1;white-space:nowrap;color:#b8323c;left:73.5px;">33021020</div>
<div style="position:absolute;left:151px;top:596px;width:299px;height:22px;overflow:hidden;"><div style="position:absolute;left:2px;top:0.24px;font-size:14.25px;line-height:18px;white-space:nowrap;color:#b8323c;font-weight:normal;"><span style="color:#555">- - </span>Chế phẩm rượu thơm, loại dùng để sản<br>xuất đồ uống có cồn, ở dạng khác</div></div>
<div style="position:absolute;left:451px;top:596px;width:297px;height:22px;overflow:hidden;"><div style="position:absolute;left:2px;top:0.24px;font-size:14.25px;line-height:18px;white-space:nowrap;color:#b8323c;font-weight:normal;"><span style="color:#555">- - </span>Odoriferous alcoholic preparations of a<br>kind used in the manufacture of alcoholic</div></div>
<div style="position:absolute;top:601.05px;font-size:14px;line-height:1;white-space:nowrap;color:#b8323c;left:748px;width:82px;text-align:center;">kg/lít</div>
<div style="position:absolute;left:831px;top:596px;width:51px;height:22px;overflow:hidden;"><div style="position:absolute;left:3px;top:5.05px;font-size:14px;line-height:1;white-space:nowrap;color:#b8323c;font-weight:normal;">15</div></div>
<div style="position:absolute;left:883px;top:596px;width:46px;height:22px;overflow:hidden;"><div style="position:absolute;left:3px;top:5.05px;font-size:14px;line-height:1;white-space:nowrap;color:#b8323c;font-weight:normal;">10</div></div>
<div style="position:absolute;left:930px;top:596px;width:42px;height:22px;overflow:hidden;"><div style="position:absolute;left:3px;top:5.05px;font-size:14px;line-height:1;white-space:nowrap;color:#b8323c;font-weight:normal;">10</div></div>
<div style="position:absolute;left:973px;top:596px;width:46px;height:22px;overflow:hidden;"><div style="position:absolute;left:3px;top:5.05px;font-size:14px;line-height:1;white-space:nowrap;color:#b8323c;font-weight:normal;">0</div></div>
<div style="position:absolute;left:1020px;top:596px;width:38px;height:22px;overflow:hidden;"><div style="position:absolute;left:3px;top:5.05px;font-size:14px;line-height:1;white-space:nowrap;color:#b8323c;font-weight:normal;">0</div></div>
<div style="position:absolute;left:1059px;top:596px;width:45px;height:22px;overflow:hidden;"><div style="position:absolute;left:3px;top:5.05px;font-size:14px;line-height:1;white-space:nowrap;color:#b8323c;font-weight:normal;">0</div></div>
<div style="position:absolute;left:1105px;top:596px;width:46px;height:22px;overflow:hidden;"><div style="position:absolute;left:3px;top:5.05px;font-size:14px;line-height:1;white-space:nowrap;color:#b8323c;font-weight:normal;">0</div></div>
<div style="position:absolute;left:1152px;top:596px;width:48px;height:22px;overflow:hidden;"><div style="position:absolute;left:3px;top:5.05px;font-size:14px;line-height:1;white-space:nowrap;color:#b8323c;font-weight:normal;">0(-ID, MY)</div></div>
<div style="position:absolute;left:1201px;top:596px;width:47px;height:22px;overflow:hidden;"><div style="position:absolute;left:3px;top:5.05px;font-size:14px;line-height:1;white-space:nowrap;color:#b8323c;font-weight:normal;">0</div></div>
<div style="position:absolute;left:1249px;top:596px;width:47px;height:22px;overflow:hidden;"><div style="position:absolute;left:3px;top:5.05px;font-size:14px;line-height:1;white-space:nowrap;color:#b8323c;font-weight:normal;">0</div></div>
<div style="position:absolute;left:1297px;top:596px;width:49px;height:22px;overflow:hidden;"><div style="position:absolute;left:3px;top:5.05px;font-size:14px;line-height:1;white-space:nowrap;color:#b8323c;font-weight:normal;">0</div></div>
<div style="position:absolute;left:1347px;top:596px;width:54px;height:22px;overflow:hidden;"><div style="position:absolute;left:3px;top:5.05px;font-size:14px;line-height:1;white-space:nowrap;color:#b8323c;font-weight:normal;">3</div></div>
<div style="position:absolute;left:1402px;top:596px;width:55px;height:22px;overflow:hidden;"><div style="position:absolute;left:3px;top:5.05px;font-size:14px;line-height:1;white-space:nowrap;color:#b8323c;font-weight:normal;">0</div></div>
<div style="position:absolute;left:1458px;top:596px;width:40px;height:22px;overflow:hidden;"><div style="position:absolute;left:3px;top:5.05px;font-size:14px;line-height:1;white-space:nowrap;color:#b8323c;font-weight:normal;">M: 2,5</div></div>
<div style="position:absolute;top:623.22px;font-size:11px;line-height:1;white-space:nowrap;color:#5f6368;left:-14px;width:40px;text-align:center;">1737</div>
<div style="position:absolute;left:0px;top:640px;width:30px;height:1px;background:#e1e3e6;"></div>
<div style="position:absolute;top:623.56px;font-size:14.5px;line-height:1;white-space:nowrap;color:#1c2f6e;font-weight:bold;left:30px;width:13.6px;text-align:center;transform:scaleX(0.85);">8</div>
<div style="position:absolute;left:43px;top:640px;width:1455px;height:1px;background:#a6a6a6;"></div>
<div style="position:absolute;left:69px;top:619px;width:1px;height:21px;background:#a6a6a6;"></div>
<div style="position:absolute;left:450px;top:619px;width:1px;height:21px;background:#a6a6a6;"></div>
<div style="position:absolute;left:748px;top:619px;width:1px;height:21px;background:#a6a6a6;"></div>
<div style="position:absolute;left:830px;top:619px;width:1px;height:21px;background:#a6a6a6;"></div>
<div style="position:absolute;left:882px;top:619px;width:1px;height:21px;background:#a6a6a6;"></div>
<div style="position:absolute;left:929px;top:619px;width:1px;height:21px;background:#a6a6a6;"></div>
<div style="position:absolute;left:972px;top:619px;width:1px;height:21px;background:#a6a6a6;"></div>
<div style="position:absolute;left:1019px;top:619px;width:1px;height:21px;background:#a6a6a6;"></div>
<div style="position:absolute;left:1058px;top:619px;width:1px;height:21px;background:#a6a6a6;"></div>
<div style="position:absolute;left:1104px;top:619px;width:1px;height:21px;background:#a6a6a6;"></div>
<div style="position:absolute;left:1151px;top:619px;width:1px;height:21px;background:#a6a6a6;"></div>
<div style="position:absolute;left:1200px;top:619px;width:1px;height:21px;background:#a6a6a6;"></div>
<div style="position:absolute;left:1248px;top:619px;width:1px;height:21px;background:#a6a6a6;"></div>
<div style="position:absolute;left:1296px;top:619px;width:1px;height:21px;background:#a6a6a6;"></div>
<div style="position:absolute;left:1346px;top:619px;width:1px;height:21px;background:#a6a6a6;"></div>
<div style="position:absolute;left:1401px;top:619px;width:1px;height:21px;background:#a6a6a6;"></div>
<div style="position:absolute;left:1457px;top:619px;width:1px;height:21px;background:#a6a6a6;"></div>
<div style="position:absolute;left:1498px;top:619px;width:1px;height:21px;background:#a6a6a6;"></div>
<div style="position:absolute;left:43px;top:619px;width:1px;height:21px;background:#a6a6a6;"></div>
<div style="position:absolute;top:623.68px;font-size:14px;line-height:1;white-space:nowrap;color:#b8323c;left:43px;width:26px;text-align:center;">2</div>
<div style="position:absolute;top:623.68px;font-size:14px;line-height:1;white-space:nowrap;color:#b8323c;left:73.5px;">33021090</div>
<div style="position:absolute;left:151px;top:619px;width:299px;height:21px;overflow:hidden;"><div style="position:absolute;left:2px;top:4.27px;font-size:14.25px;line-height:1;white-space:nowrap;color:#b8323c;font-weight:normal;"><span style="color:#555">- - </span>Loại khác</div></div>
<div style="position:absolute;left:451px;top:619px;width:297px;height:21px;overflow:hidden;"><div style="position:absolute;left:2px;top:4.27px;font-size:14.25px;line-height:1;white-space:nowrap;color:#b8323c;font-weight:normal;"><span style="color:#555">- - </span>Other</div></div>
<div style="position:absolute;top:623.18px;font-size:14px;line-height:1;white-space:nowrap;color:#b8323c;left:748px;width:82px;text-align:center;">kg/lít</div>
<div style="position:absolute;left:831px;top:619px;width:51px;height:21px;overflow:hidden;"><div style="position:absolute;left:3px;top:4.18px;font-size:14px;line-height:1;white-space:nowrap;color:#b8323c;font-weight:normal;">12</div></div>
<div style="position:absolute;left:883px;top:619px;width:46px;height:21px;overflow:hidden;"><div style="position:absolute;left:3px;top:4.18px;font-size:14px;line-height:1;white-space:nowrap;color:#b8323c;font-weight:normal;">8</div></div>
<div style="position:absolute;left:930px;top:619px;width:42px;height:21px;overflow:hidden;"><div style="position:absolute;left:3px;top:4.18px;font-size:14px;line-height:1;white-space:nowrap;color:#b8323c;font-weight:normal;">10</div></div>
<div style="position:absolute;left:973px;top:619px;width:46px;height:21px;overflow:hidden;"><div style="position:absolute;left:3px;top:4.18px;font-size:14px;line-height:1;white-space:nowrap;color:#b8323c;font-weight:normal;">0</div></div>
<div style="position:absolute;left:1020px;top:619px;width:38px;height:21px;overflow:hidden;"><div style="position:absolute;left:3px;top:4.18px;font-size:14px;line-height:1;white-space:nowrap;color:#b8323c;font-weight:normal;">0</div></div>
<div style="position:absolute;left:1059px;top:619px;width:45px;height:21px;overflow:hidden;"><div style="position:absolute;left:3px;top:4.18px;font-size:14px;line-height:1;white-space:nowrap;color:#b8323c;font-weight:normal;">0</div></div>
<div style="position:absolute;left:1105px;top:619px;width:46px;height:21px;overflow:hidden;"><div style="position:absolute;left:3px;top:4.18px;font-size:14px;line-height:1;white-space:nowrap;color:#b8323c;font-weight:normal;">0</div></div>
<div style="position:absolute;left:1152px;top:619px;width:48px;height:21px;overflow:hidden;"><div style="position:absolute;left:3px;top:4.18px;font-size:14px;line-height:1;white-space:nowrap;color:#b8323c;font-weight:normal;">0(-MY)</div></div>
<div style="position:absolute;left:1201px;top:619px;width:47px;height:21px;overflow:hidden;"><div style="position:absolute;left:3px;top:4.18px;font-size:14px;line-height:1;white-space:nowrap;color:#b8323c;font-weight:normal;">0</div></div>
<div style="position:absolute;left:1249px;top:619px;width:47px;height:21px;overflow:hidden;"><div style="position:absolute;left:3px;top:4.18px;font-size:14px;line-height:1;white-space:nowrap;color:#b8323c;font-weight:normal;">0</div></div>
<div style="position:absolute;left:1297px;top:619px;width:49px;height:21px;overflow:hidden;"><div style="position:absolute;left:3px;top:4.18px;font-size:14px;line-height:1;white-space:nowrap;color:#b8323c;font-weight:normal;">0</div></div>
<div style="position:absolute;left:1347px;top:619px;width:54px;height:21px;overflow:hidden;"><div style="position:absolute;left:3px;top:4.18px;font-size:14px;line-height:1;white-space:nowrap;color:#b8323c;font-weight:normal;">1</div></div>
<div style="position:absolute;left:1402px;top:619px;width:55px;height:21px;overflow:hidden;"><div style="position:absolute;left:3px;top:4.18px;font-size:14px;line-height:1;white-space:nowrap;color:#b8323c;font-weight:normal;">0</div></div>
<div style="position:absolute;left:1458px;top:619px;width:40px;height:21px;overflow:hidden;"><div style="position:absolute;left:3px;top:4.18px;font-size:14px;line-height:1;white-space:nowrap;color:#b8323c;font-weight:normal;">M: 2,</div></div>
<div style="position:absolute;top:645.35px;font-size:11px;line-height:1;white-space:nowrap;color:#5f6368;left:-14px;width:40px;text-align:center;">1738</div>
<div style="position:absolute;left:0px;top:662px;width:30px;height:1px;background:#e1e3e6;"></div>
<div style="position:absolute;top:645.69px;font-size:14.5px;line-height:1;white-space:nowrap;color:#1c2f6e;font-weight:bold;left:30px;width:13.6px;text-align:center;transform:scaleX(0.85);">8</div>
<div style="position:absolute;left:43px;top:662px;width:1455px;height:1px;background:#a6a6a6;"></div>
<div style="position:absolute;left:69px;top:641px;width:1px;height:21px;background:#a6a6a6;"></div>
<div style="position:absolute;left:450px;top:641px;width:1px;height:21px;background:#a6a6a6;"></div>
<div style="position:absolute;left:748px;top:641px;width:1px;height:21px;background:#a6a6a6;"></div>
<div style="position:absolute;left:830px;top:641px;width:1px;height:21px;background:#a6a6a6;"></div>
<div style="position:absolute;left:882px;top:641px;width:1px;height:21px;background:#a6a6a6;"></div>
<div style="position:absolute;left:929px;top:641px;width:1px;height:21px;background:#a6a6a6;"></div>
<div style="position:absolute;left:972px;top:641px;width:1px;height:21px;background:#a6a6a6;"></div>
<div style="position:absolute;left:1019px;top:641px;width:1px;height:21px;background:#a6a6a6;"></div>
<div style="position:absolute;left:1058px;top:641px;width:1px;height:21px;background:#a6a6a6;"></div>
<div style="position:absolute;left:1104px;top:641px;width:1px;height:21px;background:#a6a6a6;"></div>
<div style="position:absolute;left:1151px;top:641px;width:1px;height:21px;background:#a6a6a6;"></div>
<div style="position:absolute;left:1200px;top:641px;width:1px;height:21px;background:#a6a6a6;"></div>
<div style="position:absolute;left:1248px;top:641px;width:1px;height:21px;background:#a6a6a6;"></div>
<div style="position:absolute;left:1296px;top:641px;width:1px;height:21px;background:#a6a6a6;"></div>
<div style="position:absolute;left:1346px;top:641px;width:1px;height:21px;background:#a6a6a6;"></div>
<div style="position:absolute;left:1401px;top:641px;width:1px;height:21px;background:#a6a6a6;"></div>
<div style="position:absolute;left:1457px;top:641px;width:1px;height:21px;background:#a6a6a6;"></div>
<div style="position:absolute;left:1498px;top:641px;width:1px;height:21px;background:#a6a6a6;"></div>
<div style="position:absolute;left:43px;top:641px;width:1px;height:21px;background:#a6a6a6;"></div>
<div style="position:absolute;top:645.81px;font-size:14px;line-height:1;white-space:nowrap;color:#4343c8;left:43px;width:26px;text-align:center;">1</div>
<div style="position:absolute;top:645.81px;font-size:14px;line-height:1;white-space:nowrap;color:#4343c8;left:73.5px;">33029000</div>
<div style="position:absolute;left:151px;top:641px;width:299px;height:21px;overflow:hidden;"><div style="position:absolute;left:2px;top:4.40px;font-size:14.25px;line-height:1;white-space:nowrap;color:#4343c8;font-weight:normal;"><span style="color:#555">- </span>Loại khác</div></div>
<div style="position:absolute;left:451px;top:641px;width:297px;height:21px;overflow:hidden;"><div style="position:absolute;left:2px;top:4.40px;font-size:14.25px;line-height:1;white-space:nowrap;color:#4343c8;font-weight:normal;"><span style="color:#555">- </span>Other</div></div>
<div style="position:absolute;top:645.31px;font-size:14px;line-height:1;white-space:nowrap;color:#4343c8;left:748px;width:82px;text-align:center;">kg/lít</div>
<div style="position:absolute;left:831px;top:641px;width:51px;height:21px;overflow:hidden;"><div style="position:absolute;left:3px;top:4.31px;font-size:14px;line-height:1;white-space:nowrap;color:#4343c8;font-weight:normal;">7.5</div></div>
<div style="position:absolute;left:883px;top:641px;width:46px;height:21px;overflow:hidden;"><div style="position:absolute;left:3px;top:4.31px;font-size:14px;line-height:1;white-space:nowrap;color:#4343c8;font-weight:normal;">5</div></div>
<div style="position:absolute;left:930px;top:641px;width:42px;height:21px;overflow:hidden;"><div style="position:absolute;left:3px;top:4.31px;font-size:14px;line-height:1;white-space:nowrap;color:#4343c8;font-weight:normal;">10</div></div>
<div style="position:absolute;left:973px;top:641px;width:46px;height:21px;overflow:hidden;"><div style="position:absolute;left:3px;top:4.31px;font-size:14px;line-height:1;white-space:nowrap;color:#4343c8;font-weight:normal;">0</div></div>
<div style="position:absolute;left:1020px;top:641px;width:38px;height:21px;overflow:hidden;"><div style="position:absolute;left:3px;top:4.31px;font-size:14px;line-height:1;white-space:nowrap;color:#4343c8;font-weight:normal;">0</div></div>
<div style="position:absolute;left:1059px;top:641px;width:45px;height:21px;overflow:hidden;"><div style="position:absolute;left:3px;top:4.31px;font-size:14px;line-height:1;white-space:nowrap;color:#4343c8;font-weight:normal;">0</div></div>
<div style="position:absolute;left:1105px;top:641px;width:46px;height:21px;overflow:hidden;"><div style="position:absolute;left:3px;top:4.31px;font-size:14px;line-height:1;white-space:nowrap;color:#4343c8;font-weight:normal;">0</div></div>
<div style="position:absolute;left:1152px;top:641px;width:48px;height:21px;overflow:hidden;"><div style="position:absolute;left:3px;top:4.31px;font-size:14px;line-height:1;white-space:nowrap;color:#4343c8;font-weight:normal;">0</div></div>
<div style="position:absolute;left:1201px;top:641px;width:47px;height:21px;overflow:hidden;"><div style="position:absolute;left:3px;top:4.31px;font-size:14px;line-height:1;white-space:nowrap;color:#4343c8;font-weight:normal;">0</div></div>
<div style="position:absolute;left:1249px;top:641px;width:47px;height:21px;overflow:hidden;"><div style="position:absolute;left:3px;top:4.31px;font-size:14px;line-height:1;white-space:nowrap;color:#4343c8;font-weight:normal;">0</div></div>
<div style="position:absolute;left:1297px;top:641px;width:49px;height:21px;overflow:hidden;"><div style="position:absolute;left:3px;top:4.31px;font-size:14px;line-height:1;white-space:nowrap;color:#4343c8;font-weight:normal;">0</div></div>
<div style="position:absolute;left:1347px;top:641px;width:54px;height:21px;overflow:hidden;"><div style="position:absolute;left:3px;top:4.31px;font-size:14px;line-height:1;white-space:nowrap;color:#4343c8;font-weight:normal;">5</div></div>
<div style="position:absolute;left:1402px;top:641px;width:55px;height:21px;overflow:hidden;"><div style="position:absolute;left:3px;top:4.31px;font-size:14px;line-height:1;white-space:nowrap;color:#4343c8;font-weight:normal;">0</div></div>
<div style="position:absolute;left:1458px;top:641px;width:40px;height:21px;overflow:hidden;"><div style="position:absolute;left:3px;top:4.31px;font-size:14px;line-height:1;white-space:nowrap;color:#4343c8;font-weight:normal;">0</div></div>
<div style="position:absolute;top:667.48px;font-size:11px;line-height:1;white-space:nowrap;color:#5f6368;left:-14px;width:40px;text-align:center;">1739</div>
<div style="position:absolute;left:0px;top:684px;width:30px;height:1px;background:#e1e3e6;"></div>
<div style="position:absolute;top:667.82px;font-size:14.5px;line-height:1;white-space:nowrap;color:#1c2f6e;font-weight:bold;left:30px;width:13.6px;text-align:center;transform:scaleX(0.85);">8</div>
<div style="position:absolute;left:43px;top:684px;width:1455px;height:1px;background:#a6a6a6;"></div>
<div style="position:absolute;left:69px;top:663px;width:1px;height:21px;background:#a6a6a6;"></div>
<div style="position:absolute;left:450px;top:663px;width:1px;height:21px;background:#a6a6a6;"></div>
<div style="position:absolute;left:748px;top:663px;width:1px;height:21px;background:#a6a6a6;"></div>
<div style="position:absolute;left:830px;top:663px;width:1px;height:21px;background:#a6a6a6;"></div>
<div style="position:absolute;left:882px;top:663px;width:1px;height:21px;background:#a6a6a6;"></div>
<div style="position:absolute;left:929px;top:663px;width:1px;height:21px;background:#a6a6a6;"></div>
<div style="position:absolute;left:972px;top:663px;width:1px;height:21px;background:#a6a6a6;"></div>
<div style="position:absolute;left:1019px;top:663px;width:1px;height:21px;background:#a6a6a6;"></div>
<div style="position:absolute;left:1058px;top:663px;width:1px;height:21px;background:#a6a6a6;"></div>
<div style="position:absolute;left:1104px;top:663px;width:1px;height:21px;background:#a6a6a6;"></div>
<div style="position:absolute;left:1151px;top:663px;width:1px;height:21px;background:#a6a6a6;"></div>
<div style="position:absolute;left:1200px;top:663px;width:1px;height:21px;background:#a6a6a6;"></div>
<div style="position:absolute;left:1248px;top:663px;width:1px;height:21px;background:#a6a6a6;"></div>
<div style="position:absolute;left:1296px;top:663px;width:1px;height:21px;background:#a6a6a6;"></div>
<div style="position:absolute;left:1346px;top:663px;width:1px;height:21px;background:#a6a6a6;"></div>
<div style="position:absolute;left:1401px;top:663px;width:1px;height:21px;background:#a6a6a6;"></div>
<div style="position:absolute;left:1457px;top:663px;width:1px;height:21px;background:#a6a6a6;"></div>
<div style="position:absolute;left:1498px;top:663px;width:1px;height:21px;background:#a6a6a6;"></div>
<div style="position:absolute;left:43px;top:663px;width:1px;height:21px;background:#a6a6a6;"></div>
<div style="position:absolute;top:667.94px;font-size:14px;line-height:1;white-space:nowrap;color:#1c2f6e;font-weight:bold;left:43px;width:26px;text-align:center;"></div>
<div style="position:absolute;top:667.94px;font-size:14px;line-height:1;white-space:nowrap;color:#1c2f6e;font-weight:bold;left:73.5px;">33030000</div>
<div style="position:absolute;left:151px;top:663px;width:299px;height:21px;overflow:hidden;"><div style="position:absolute;left:2px;top:4.53px;font-size:14.25px;line-height:1;white-space:nowrap;color:#1c2f6e;font-weight:bold;">Nước hoa và nước thơm.</div></div>
<div style="position:absolute;left:451px;top:663px;width:297px;height:21px;overflow:hidden;"><div style="position:absolute;left:2px;top:4.53px;font-size:14.25px;line-height:1;white-space:nowrap;color:#1c2f6e;font-weight:bold;">Perfumes and toilet waters.</div></div>
<div style="position:absolute;top:667.44px;font-size:14px;line-height:1;white-space:nowrap;color:#1c2f6e;font-weight:bold;left:748px;width:82px;text-align:center;">kg/lít/chiếc</div>
<div style="position:absolute;left:831px;top:663px;width:51px;height:21px;overflow:hidden;"><div style="position:absolute;left:3px;top:4.44px;font-size:14px;line-height:1;white-space:nowrap;color:#1c2f6e;font-weight:bold;">27</div></div>
<div style="position:absolute;left:883px;top:663px;width:46px;height:21px;overflow:hidden;"><div style="position:absolute;left:3px;top:4.44px;font-size:14px;line-height:1;white-space:nowrap;color:#1c2f6e;font-weight:bold;">18</div></div>
<div style="position:absolute;left:930px;top:663px;width:42px;height:21px;overflow:hidden;"><div style="position:absolute;left:3px;top:4.44px;font-size:14px;line-height:1;white-space:nowrap;color:#1c2f6e;font-weight:bold;">10</div></div>
<div style="position:absolute;left:973px;top:663px;width:46px;height:21px;overflow:hidden;"><div style="position:absolute;left:3px;top:4.44px;font-size:14px;line-height:1;white-space:nowrap;color:#1c2f6e;font-weight:bold;">0 (-KH, MY)</div></div>
<div style="position:absolute;left:1020px;top:663px;width:38px;height:21px;overflow:hidden;"><div style="position:absolute;left:3px;top:4.44px;font-size:14px;line-height:1;white-space:nowrap;color:#1c2f6e;font-weight:bold;">0</div></div>
<div style="position:absolute;left:1059px;top:663px;width:45px;height:21px;overflow:hidden;"><div style="position:absolute;left:3px;top:4.44px;font-size:14px;line-height:1;white-space:nowrap;color:#1c2f6e;font-weight:bold;">0</div></div>
<div style="position:absolute;left:1105px;top:663px;width:46px;height:21px;overflow:hidden;"><div style="position:absolute;left:3px;top:4.44px;font-size:14px;line-height:1;white-space:nowrap;color:#1c2f6e;font-weight:bold;">0</div></div>
<div style="position:absolute;left:1152px;top:663px;width:48px;height:21px;overflow:hidden;"><div style="position:absolute;left:3px;top:4.44px;font-size:14px;line-height:1;white-space:nowrap;color:#1c2f6e;font-weight:bold;">5</div></div>
<div style="position:absolute;left:1201px;top:663px;width:47px;height:21px;overflow:hidden;"><div style="position:absolute;left:3px;top:4.44px;font-size:14px;line-height:1;white-space:nowrap;color:#1c2f6e;font-weight:bold;">0</div></div>
<div style="position:absolute;left:1249px;top:663px;width:47px;height:21px;overflow:hidden;"><div style="position:absolute;left:3px;top:4.44px;font-size:14px;line-height:1;white-space:nowrap;color:#1c2f6e;font-weight:bold;">9</div></div>
<div style="position:absolute;left:1297px;top:663px;width:49px;height:21px;overflow:hidden;"><div style="position:absolute;left:3px;top:4.44px;font-size:14px;line-height:1;white-space:nowrap;color:#1c2f6e;font-weight:bold;">5</div></div>
<div style="position:absolute;left:1347px;top:663px;width:54px;height:21px;overflow:hidden;"><div style="position:absolute;left:3px;top:4.44px;font-size:14px;line-height:1;white-space:nowrap;color:#1c2f6e;font-weight:bold;">7</div></div>
<div style="position:absolute;left:1402px;top:663px;width:55px;height:21px;overflow:hidden;"><div style="position:absolute;left:3px;top:4.44px;font-size:14px;line-height:1;white-space:nowrap;color:#1c2f6e;font-weight:bold;">6,5</div></div>
<div style="position:absolute;left:1458px;top:663px;width:40px;height:21px;overflow:hidden;"><div style="position:absolute;left:3px;top:4.44px;font-size:14px;line-height:1;white-space:nowrap;color:#1c2f6e;font-weight:bold;">M: 5,5</div></div>
<div style="position:absolute;top:689.61px;font-size:11px;line-height:1;white-space:nowrap;color:#5f6368;left:-14px;width:40px;text-align:center;">1740</div>
<div style="position:absolute;left:0px;top:707px;width:30px;height:1px;background:#e1e3e6;"></div>
<div style="position:absolute;top:689.95px;font-size:14.5px;line-height:1;white-space:nowrap;color:#1c2f6e;font-weight:bold;left:30px;width:13.6px;text-align:center;transform:scaleX(0.85);">4</div>
<div style="position:absolute;left:43px;top:707px;width:1455px;height:1px;background:#a6a6a6;"></div>
<div style="position:absolute;left:69px;top:685px;width:1px;height:22px;background:#a6a6a6;"></div>
<div style="position:absolute;left:450px;top:685px;width:1px;height:22px;background:#a6a6a6;"></div>
<div style="position:absolute;left:748px;top:685px;width:1px;height:22px;background:#a6a6a6;"></div>
<div style="position:absolute;left:830px;top:685px;width:1px;height:22px;background:#a6a6a6;"></div>
<div style="position:absolute;left:882px;top:685px;width:1px;height:22px;background:#a6a6a6;"></div>
<div style="position:absolute;left:929px;top:685px;width:1px;height:22px;background:#a6a6a6;"></div>
<div style="position:absolute;left:972px;top:685px;width:1px;height:22px;background:#a6a6a6;"></div>
<div style="position:absolute;left:1019px;top:685px;width:1px;height:22px;background:#a6a6a6;"></div>
<div style="position:absolute;left:1058px;top:685px;width:1px;height:22px;background:#a6a6a6;"></div>
<div style="position:absolute;left:1104px;top:685px;width:1px;height:22px;background:#a6a6a6;"></div>
<div style="position:absolute;left:1151px;top:685px;width:1px;height:22px;background:#a6a6a6;"></div>
<div style="position:absolute;left:1200px;top:685px;width:1px;height:22px;background:#a6a6a6;"></div>
<div style="position:absolute;left:1248px;top:685px;width:1px;height:22px;background:#a6a6a6;"></div>
<div style="position:absolute;left:1296px;top:685px;width:1px;height:22px;background:#a6a6a6;"></div>
<div style="position:absolute;left:1346px;top:685px;width:1px;height:22px;background:#a6a6a6;"></div>
<div style="position:absolute;left:1401px;top:685px;width:1px;height:22px;background:#a6a6a6;"></div>
<div style="position:absolute;left:1457px;top:685px;width:1px;height:22px;background:#a6a6a6;"></div>
<div style="position:absolute;left:1498px;top:685px;width:1px;height:22px;background:#a6a6a6;"></div>
<div style="position:absolute;left:43px;top:685px;width:1px;height:22px;background:#a6a6a6;"></div>
<div style="position:absolute;top:690.07px;font-size:14px;line-height:1;white-space:nowrap;color:#1c2f6e;font-weight:bold;left:43px;width:26px;text-align:center;"></div>
<div style="position:absolute;top:690.07px;font-size:14px;line-height:1;white-space:nowrap;color:#1c2f6e;font-weight:bold;left:73.5px;">3304</div>
<div style="position:absolute;left:151px;top:685px;width:299px;height:22px;overflow:hidden;"><div style="position:absolute;left:2px;top:-0.24px;font-size:14.25px;line-height:18px;white-space:nowrap;color:#1c2f6e;font-weight:bold;">Mỹ phẩm hoặc các chế phẩm để trang điểm<br>hoặc để dưỡng da (trừ dược phẩm)</div></div>
<div style="position:absolute;left:451px;top:685px;width:297px;height:22px;overflow:hidden;"><div style="position:absolute;left:2px;top:-0.24px;font-size:14.25px;line-height:18px;white-space:nowrap;color:#1c2f6e;font-weight:bold;">Beauty or make-up preparations and<br>preparations for the care of the skin (other</div></div>
<div style="position:absolute;top:711.74px;font-size:11px;line-height:1;white-space:nowrap;color:#5f6368;left:-14px;width:40px;text-align:center;">1741</div>
<div style="position:absolute;left:0px;top:729px;width:30px;height:1px;background:#e1e3e6;"></div>
<div style="position:absolute;top:712.08px;font-size:14.5px;line-height:1;white-space:nowrap;color:#1c2f6e;font-weight:bold;left:30px;width:13.6px;text-align:center;transform:scaleX(0.85);">8</div>
<div style="position:absolute;left:43px;top:729px;width:1455px;height:1px;background:#a6a6a6;"></div>
<div style="position:absolute;left:69px;top:707px;width:1px;height:22px;background:#a6a6a6;"></div>
<div style="position:absolute;left:450px;top:707px;width:1px;height:22px;background:#a6a6a6;"></div>
<div style="position:absolute;left:748px;top:707px;width:1px;height:22px;background:#a6a6a6;"></div>
<div style="position:absolute;left:830px;top:707px;width:1px;height:22px;background:#a6a6a6;"></div>
<div style="position:absolute;left:882px;top:707px;width:1px;height:22px;background:#a6a6a6;"></div>
<div style="position:absolute;left:929px;top:707px;width:1px;height:22px;background:#a6a6a6;"></div>
<div style="position:absolute;left:972px;top:707px;width:1px;height:22px;background:#a6a6a6;"></div>
<div style="position:absolute;left:1019px;top:707px;width:1px;height:22px;background:#a6a6a6;"></div>
<div style="position:absolute;left:1058px;top:707px;width:1px;height:22px;background:#a6a6a6;"></div>
<div style="position:absolute;left:1104px;top:707px;width:1px;height:22px;background:#a6a6a6;"></div>
<div style="position:absolute;left:1151px;top:707px;width:1px;height:22px;background:#a6a6a6;"></div>
<div style="position:absolute;left:1200px;top:707px;width:1px;height:22px;background:#a6a6a6;"></div>
<div style="position:absolute;left:1248px;top:707px;width:1px;height:22px;background:#a6a6a6;"></div>
<div style="position:absolute;left:1296px;top:707px;width:1px;height:22px;background:#a6a6a6;"></div>
<div style="position:absolute;left:1346px;top:707px;width:1px;height:22px;background:#a6a6a6;"></div>
<div style="position:absolute;left:1401px;top:707px;width:1px;height:22px;background:#a6a6a6;"></div>
<div style="position:absolute;left:1457px;top:707px;width:1px;height:22px;background:#a6a6a6;"></div>
<div style="position:absolute;left:1498px;top:707px;width:1px;height:22px;background:#a6a6a6;"></div>
<div style="position:absolute;left:43px;top:707px;width:1px;height:22px;background:#a6a6a6;"></div>
<div style="position:absolute;top:712.20px;font-size:14px;line-height:1;white-space:nowrap;color:#4343c8;left:43px;width:26px;text-align:center;">1</div>
<div style="position:absolute;left:68px;top:705px;width:79px;height:25px;background:#c4deb4;"></div>
<div style="position:absolute;top:712.20px;font-size:14px;line-height:1;white-space:nowrap;color:#5a7aa8;left:73.5px;">33041000</div>
<div style="position:absolute;left:151px;top:707px;width:299px;height:22px;overflow:hidden;"><div style="position:absolute;left:2px;top:4.79px;font-size:14.25px;line-height:1;white-space:nowrap;color:#4343c8;font-weight:normal;"><span style="color:#555">- </span>Chế phẩm trang điểm môi</div></div>
<div style="position:absolute;left:451px;top:707px;width:297px;height:22px;overflow:hidden;"><div style="position:absolute;left:2px;top:4.79px;font-size:14.25px;line-height:1;white-space:nowrap;color:#4343c8;font-weight:normal;"><span style="color:#555">- </span>Lip make-up preparations</div></div>
<div style="position:absolute;top:711.70px;font-size:14px;line-height:1;white-space:nowrap;color:#4343c8;left:748px;width:82px;text-align:center;">kg/chiếc</div>
<div style="position:absolute;left:831px;top:707px;width:51px;height:22px;overflow:hidden;"><div style="position:absolute;left:3px;top:4.70px;font-size:14px;line-height:1;white-space:nowrap;color:#4343c8;font-weight:normal;">30</div></div>
<div style="position:absolute;left:883px;top:707px;width:46px;height:22px;overflow:hidden;"><div style="position:absolute;left:3px;top:4.70px;font-size:14px;line-height:1;white-space:nowrap;color:#4343c8;font-weight:normal;">20</div></div>
<div style="position:absolute;left:930px;top:707px;width:42px;height:22px;overflow:hidden;"><div style="position:absolute;left:3px;top:4.70px;font-size:14px;line-height:1;white-space:nowrap;color:#4343c8;font-weight:normal;">10</div></div>
<div style="position:absolute;left:973px;top:707px;width:46px;height:22px;overflow:hidden;"><div style="position:absolute;left:3px;top:4.70px;font-size:14px;line-height:1;white-space:nowrap;color:#4343c8;font-weight:normal;">0 (-ID)</div></div>
<div style="position:absolute;left:1020px;top:707px;width:38px;height:22px;overflow:hidden;"><div style="position:absolute;left:3px;top:4.70px;font-size:14px;line-height:1;white-space:nowrap;color:#4343c8;font-weight:normal;">0</div></div>
<div style="position:absolute;left:1059px;top:707px;width:45px;height:22px;overflow:hidden;"><div style="position:absolute;left:3px;top:4.70px;font-size:14px;line-height:1;white-space:nowrap;color:#4343c8;font-weight:normal;">0</div></div>
<div style="position:absolute;left:1105px;top:707px;width:46px;height:22px;overflow:hidden;"><div style="position:absolute;left:3px;top:4.70px;font-size:14px;line-height:1;white-space:nowrap;color:#4343c8;font-weight:normal;">0</div></div>
<div style="position:absolute;left:1152px;top:707px;width:48px;height:22px;overflow:hidden;"><div style="position:absolute;left:3px;top:4.70px;font-size:14px;line-height:1;white-space:nowrap;color:#4343c8;font-weight:normal;">5</div></div>
<div style="position:absolute;left:1201px;top:707px;width:47px;height:22px;overflow:hidden;"><div style="position:absolute;left:3px;top:4.70px;font-size:14px;line-height:1;white-space:nowrap;color:#4343c8;font-weight:normal;">0</div></div>
<div style="position:absolute;left:1249px;top:707px;width:47px;height:22px;overflow:hidden;"><div style="position:absolute;left:3px;top:4.70px;font-size:14px;line-height:1;white-space:nowrap;color:#4343c8;font-weight:normal;">9</div></div>
<div style="position:absolute;left:1297px;top:707px;width:49px;height:22px;overflow:hidden;"><div style="position:absolute;left:3px;top:4.70px;font-size:14px;line-height:1;white-space:nowrap;color:#4343c8;font-weight:normal;">5</div></div>
<div style="position:absolute;left:1347px;top:707px;width:54px;height:22px;overflow:hidden;"><div style="position:absolute;left:3px;top:4.70px;font-size:14px;line-height:1;white-space:nowrap;color:#4343c8;font-weight:normal;">9</div></div>
<div style="position:absolute;left:1402px;top:707px;width:55px;height:22px;overflow:hidden;"><div style="position:absolute;left:3px;top:4.70px;font-size:14px;line-height:1;white-space:nowrap;color:#4343c8;font-weight:normal;">7,3</div></div>
<div style="position:absolute;left:1458px;top:707px;width:40px;height:22px;overflow:hidden;"><div style="position:absolute;left:3px;top:4.70px;font-size:14px;line-height:1;white-space:nowrap;color:#4343c8;font-weight:normal;">M: 5,</div></div>
<div style="position:absolute;top:733.87px;font-size:11px;line-height:1;white-space:nowrap;color:#5f6368;left:-14px;width:40px;text-align:center;">1742</div>
<div style="position:absolute;left:0px;top:760px;width:30px;height:1px;background:#e1e3e6;"></div>
<div style="position:absolute;top:734.21px;font-size:14.5px;line-height:1;white-space:nowrap;color:#1c2f6e;font-weight:bold;left:30px;width:13.6px;text-align:center;transform:scaleX(0.85);">8</div>
<div style="position:absolute;left:43px;top:760px;width:1455px;height:1px;background:#a6a6a6;"></div>
<div style="position:absolute;left:69px;top:729px;width:1px;height:31px;background:#a6a6a6;"></div>
<div style="position:absolute;left:450px;top:729px;width:1px;height:31px;background:#a6a6a6;"></div>
<div style="position:absolute;left:748px;top:729px;width:1px;height:31px;background:#a6a6a6;"></div>
<div style="position:absolute;left:830px;top:729px;width:1px;height:31px;background:#a6a6a6;"></div>
<div style="position:absolute;left:882px;top:729px;width:1px;height:31px;background:#a6a6a6;"></div>
<div style="position:absolute;left:929px;top:729px;width:1px;height:31px;background:#a6a6a6;"></div>
<div style="position:absolute;left:972px;top:729px;width:1px;height:31px;background:#a6a6a6;"></div>
<div style="position:absolute;left:1019px;top:729px;width:1px;height:31px;background:#a6a6a6;"></div>
<div style="position:absolute;left:1058px;top:729px;width:1px;height:31px;background:#a6a6a6;"></div>
<div style="position:absolute;left:1104px;top:729px;width:1px;height:31px;background:#a6a6a6;"></div>
<div style="position:absolute;left:1151px;top:729px;width:1px;height:31px;background:#a6a6a6;"></div>
<div style="position:absolute;left:1200px;top:729px;width:1px;height:31px;background:#a6a6a6;"></div>
<div style="position:absolute;left:1248px;top:729px;width:1px;height:31px;background:#a6a6a6;"></div>
<div style="position:absolute;left:1296px;top:729px;width:1px;height:31px;background:#a6a6a6;"></div>
<div style="position:absolute;left:1346px;top:729px;width:1px;height:31px;background:#a6a6a6;"></div>
<div style="position:absolute;left:1401px;top:729px;width:1px;height:31px;background:#a6a6a6;"></div>
<div style="position:absolute;left:1457px;top:729px;width:1px;height:31px;background:#a6a6a6;"></div>
<div style="position:absolute;left:1498px;top:729px;width:1px;height:31px;background:#a6a6a6;"></div>
<div style="position:absolute;left:43px;top:729px;width:1px;height:31px;background:#a6a6a6;"></div>
<div style="position:absolute;top:734.33px;font-size:14px;line-height:1;white-space:nowrap;color:#4343c8;left:43px;width:26px;text-align:center;">1</div>
<div style="position:absolute;top:734.33px;font-size:14px;line-height:1;white-space:nowrap;color:#4343c8;left:73.5px;">33042000</div>
<div style="position:absolute;left:151px;top:729px;width:299px;height:31px;overflow:hidden;"><div style="position:absolute;left:2px;top:4.92px;font-size:14.25px;line-height:1;white-space:nowrap;color:#4343c8;font-weight:normal;"><span style="color:#555">- </span>Chế phẩm trang điểm mắt</div></div>
<div style="position:absolute;left:451px;top:729px;width:297px;height:31px;overflow:hidden;"><div style="position:absolute;left:2px;top:4.92px;font-size:14.25px;line-height:1;white-space:nowrap;color:#4343c8;font-weight:normal;"><span style="color:#555">- </span>Eye make-up preparations</div></div>
<div style="position:absolute;top:733.83px;font-size:14px;line-height:1;white-space:nowrap;color:#4343c8;left:748px;width:82px;text-align:center;">kg/chiếc</div>
<div style="position:absolute;left:831px;top:729px;width:51px;height:31px;overflow:hidden;"><div style="position:absolute;left:3px;top:4.83px;font-size:14px;line-height:1;white-space:nowrap;color:#4343c8;font-weight:normal;">30</div></div>
<div style="position:absolute;left:883px;top:729px;width:46px;height:31px;overflow:hidden;"><div style="position:absolute;left:3px;top:4.83px;font-size:14px;line-height:1;white-space:nowrap;color:#4343c8;font-weight:normal;">20</div></div>
<div style="position:absolute;left:930px;top:729px;width:42px;height:31px;overflow:hidden;"><div style="position:absolute;left:3px;top:4.83px;font-size:14px;line-height:1;white-space:nowrap;color:#4343c8;font-weight:normal;">10</div></div>
<div style="position:absolute;left:973px;top:729px;width:46px;height:31px;overflow:hidden;"><div style="position:absolute;left:3px;top:4.83px;font-size:14px;line-height:1;white-space:nowrap;color:#4343c8;font-weight:normal;">0 (-ID)</div></div>
<div style="position:absolute;left:1020px;top:729px;width:38px;height:31px;overflow:hidden;"><div style="position:absolute;left:3px;top:4.83px;font-size:14px;line-height:1;white-space:nowrap;color:#4343c8;font-weight:normal;">0</div></div>
<div style="position:absolute;left:1059px;top:729px;width:45px;height:31px;overflow:hidden;"><div style="position:absolute;left:3px;top:4.83px;font-size:14px;line-height:1;white-space:nowrap;color:#4343c8;font-weight:normal;">0</div></div>
<div style="position:absolute;left:1105px;top:729px;width:46px;height:31px;overflow:hidden;"><div style="position:absolute;left:3px;top:4.83px;font-size:14px;line-height:1;white-space:nowrap;color:#4343c8;font-weight:normal;">0</div></div>
<div style="position:absolute;left:1152px;top:729px;width:48px;height:31px;overflow:hidden;"><div style="position:absolute;left:3px;top:4.83px;font-size:14px;line-height:1;white-space:nowrap;color:#4343c8;font-weight:normal;">5</div></div>
<div style="position:absolute;left:1201px;top:729px;width:47px;height:31px;overflow:hidden;"><div style="position:absolute;left:3px;top:4.83px;font-size:14px;line-height:1;white-space:nowrap;color:#4343c8;font-weight:normal;">0</div></div>
<div style="position:absolute;left:1249px;top:729px;width:47px;height:31px;overflow:hidden;"><div style="position:absolute;left:3px;top:4.83px;font-size:14px;line-height:1;white-space:nowrap;color:#4343c8;font-weight:normal;">9</div></div>
<div style="position:absolute;left:1297px;top:729px;width:49px;height:31px;overflow:hidden;"><div style="position:absolute;left:3px;top:4.83px;font-size:14px;line-height:1;white-space:nowrap;color:#4343c8;font-weight:normal;">5</div></div>
<div style="position:absolute;left:1347px;top:729px;width:54px;height:31px;overflow:hidden;"><div style="position:absolute;left:3px;top:4.83px;font-size:14px;line-height:1;white-space:nowrap;color:#4343c8;font-weight:normal;">9</div></div>
<div style="position:absolute;left:1402px;top:729px;width:55px;height:31px;overflow:hidden;"><div style="position:absolute;left:3px;top:4.83px;font-size:14px;line-height:1;white-space:nowrap;color:#4343c8;font-weight:normal;">7,3</div></div>
<div style="position:absolute;left:1458px;top:729px;width:40px;height:31px;overflow:hidden;"><div style="position:absolute;left:3px;top:4.83px;font-size:14px;line-height:1;white-space:nowrap;color:#4343c8;font-weight:normal;">M: 5,</div></div>
<div style="position:absolute;left:67px;top:704px;width:81px;height:27px;border:2px solid #000;border-radius:2px;"></div>
<div style="position:absolute;left:0px;top:738px;width:1498px;height:8px;background:#f8f9fa;"></div>
<div style="position:absolute;left:151px;top:741px;width:745px;height:5px;background:#dadce0;border-radius:3px 3px 0 0;"></div>
<div style="position:absolute;left:1498px;top:135px;width:12px;height:611px;background:#fbfbfb;"></div>
<div style="position:absolute;left:1498px;top:135px;width:1px;height:611px;background:#e8eaed;"></div>
<div style="position:absolute;left:1508px;top:135px;width:1px;height:611px;background:#e8eaed;"></div>
<div style="position:absolute;left:1500px;top:446px;width:9px;height:29px;background:#dadce0;border-radius:5px;"></div>
<div style="position:absolute;left:1498px;top:705px;width:12px;height:1px;background:#e8eaed;"></div>
<div style="position:absolute;left:1498px;top:722px;width:12px;height:1px;background:#e8eaed;"></div>
<div style="position:absolute;left:1498px;top:738px;width:12px;height:1px;background:#e8eaed;"></div>
<svg style="position:absolute;left:1502px;top:712px" width="6" height="3" viewBox="0 0 6 3"><path d="M0 3L3 0L6 3z" fill="#b0b4b8"/></svg>
<svg style="position:absolute;left:1502px;top:729px" width="6" height="3" viewBox="0 0 6 3"><path d="M0 0L3 3L6 0z" fill="#b0b4b8"/></svg>
<div style="position:absolute;left:1465px;top:740px;width:1px;height:6px;background:#e8eaed;"></div>
<div style="position:absolute;left:1482px;top:740px;width:1px;height:6px;background:#e8eaed;"></div>
<svg style="position:absolute;left:1472px;top:741px" width="3" height="6" viewBox="0 0 3 6"><path d="M3 0L0 3L3 6z" fill="#b0b4b8"/></svg>
<svg style="position:absolute;left:1490px;top:741px" width="3" height="6" viewBox="0 0 3 6"><path d="M0 0L3 3L0 6z" fill="#b0b4b8"/></svg>
<div style="position:absolute;left:1510px;top:66px;width:26px;height:680px;background:#fff;"></div>
<div style="position:absolute;left:1510px;top:66px;width:1px;height:680px;background:#dadce0;"></div>
<svg style="position:absolute;left:1530px;top:87px" width="20" height="20" viewBox="0 0 20 20"><rect x="0" y="0" width="20" height="20" rx="2" fill="#4285f4"/><rect x="3" y="3" width="14" height="13" fill="#fff"/><rect x="0" y="16" width="20" height="4" fill="#34a853"/></svg>
<svg style="position:absolute;left:1530px;top:146px" width="20" height="21" viewBox="0 0 20 21"><rect x="0" y="0" width="20" height="21" rx="2" fill="#fbbc04"/></svg>
<svg style="position:absolute;left:1530px;top:205px" width="20" height="19" viewBox="0 0 20 19"><circle cx="10" cy="9.5" r="9" fill="#4285f4"/><circle cx="10" cy="9.5" r="5" fill="#fff"/></svg>
<div style="position:absolute;left:1530px;top:261px;width:6px;height:1px;background:#dadce0;"></div>
<svg style="position:absolute;left:1533px;top:305px" width="10" height="10" viewBox="0 0 10 10"><path d="M4 0H6V4H10V6H6V10H4V6H0V4H4z" fill="#5f6368"/></svg>
<div style="position:absolute;left:1054px;top:108px;width:402px;height:74px;background:#fff;border:1px solid #e3e3e3;border-top:none;border-radius:0 0 8px 8px;box-shadow:0 1px 2px rgba(60,64,67,.15);"></div>
<svg style="position:absolute;left:1068px;top:141px" width="34" height="12" viewBox="0 0 34 12"><circle cx="5.3" cy="6" r="3.4" fill="#d6d6d6"/><circle cx="16.3" cy="6" r="3.4" fill="#d6d6d6"/><circle cx="28" cy="6" r="4.5" fill="#000"/></svg>
<div style="position:absolute;left:1110px;top:130px;width:181px;height:39px;border:1px solid #e3e3e3;border-radius:5px;background:#fff;"></div>
<div style="position:absolute;top:142.49px;font-size:13.6px;line-height:1;white-space:nowrap;color:#3c4043;left:1120px;">33041</div>
<div style="position:absolute;top:141.73px;font-size:14.5px;line-height:1;white-space:nowrap;color:#c0c0c0;left:1162px;">1 trong tổng số 1</div>
<svg style="position:absolute;left:1306px;top:141px" width="14" height="9" viewBox="0 0 14 9"><path d="M1.5 8L7 2.5L12.5 8" fill="none" stroke="#5f6368" stroke-width="1.8"/></svg>
<svg style="position:absolute;left:1342px;top:143px" width="14" height="9" viewBox="0 0 14 9"><path d="M1.5 1.5L7 7L12.5 1.5" fill="none" stroke="#5f6368" stroke-width="1.8"/></svg>
<div style="position:absolute;left:1377px;top:135px;width:1px;height:24px;background:#e3e3e3;"></div>
<svg style="position:absolute;left:1394px;top:140px" width="6" height="15" viewBox="0 0 6 15"><circle cx="3" cy="2.2" r="1.8" fill="#5f6368"/><circle cx="3" cy="7.5" r="1.8" fill="#5f6368"/><circle cx="3" cy="12.8" r="1.8" fill="#5f6368"/></svg>
<svg style="position:absolute;left:1424px;top:141px" width="14" height="14" viewBox="0 0 14 14"><path d="M1 1L13 13M13 1L1 13" stroke="#5f6368" stroke-width="1.8"/></svg>
<div style="position:absolute;left:1033px;top:99px;width:293px;height:101px;border:4px solid #e20a0a;border-radius:3px;"></div>
<div style="position:absolute;left:36px;top:648px;width:1456px;height:92px;border:4px solid #e20a0a;border-radius:3px;"></div>
</body></html>
